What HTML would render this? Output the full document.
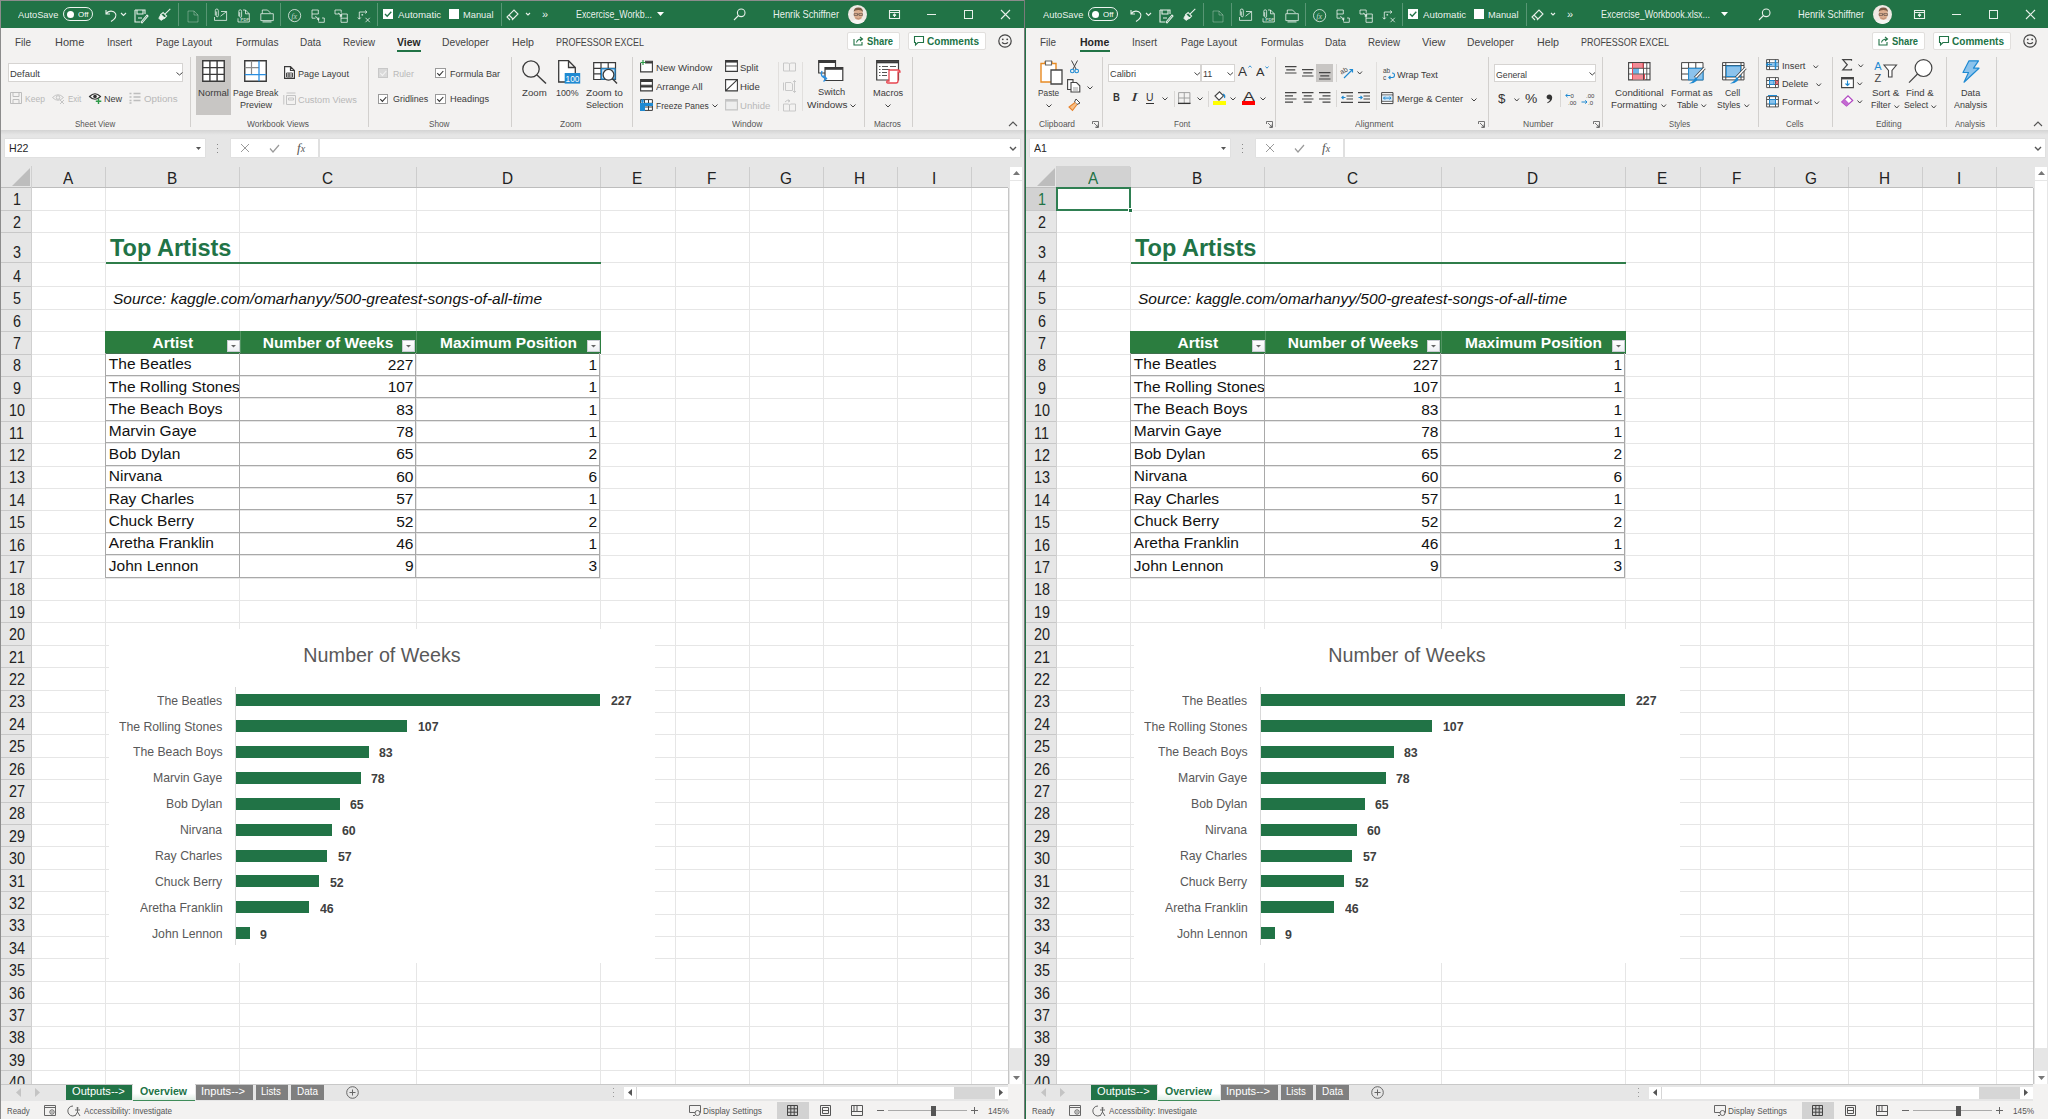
<!DOCTYPE html>
<html><head><meta charset="utf-8"><style>
*{margin:0;padding:0;box-sizing:border-box}
html,body{width:2048px;height:1119px;overflow:hidden;background:#fff;font-family:"Liberation Sans", sans-serif}
.win{position:absolute;top:0;height:1119px;overflow:hidden}
</style></head><body>
<div class="win" style="left:0px;width:1025px;background:#f3f2f1"><div style="position:absolute;left:0px;top:0px;width:1026px;height:28px;background:#217346"></div><div style="position:absolute;left:17.60px;top:9.97px;font-size:9.6px;line-height:9.6px;color:rgba(255,255,255,0.92);white-space:nowrap;transform:scaleX(0.9704);transform-origin:0 0;">AutoSave</div><div style="position:absolute;left:63px;top:7px;width:30px;height:14px;border:1px solid rgba(255,255,255,0.92);border-radius:7px"></div><div style="position:absolute;left:66.5px;top:10.5px;width:7px;height:7px;background:#fff;border-radius:50%"></div><div style="position:absolute;left:78.00px;top:10.57px;font-size:7.6px;line-height:7.6px;color:#fff;white-space:nowrap;transform:scaleX(1.0403);transform-origin:0 0;">Off</div><svg style="position:absolute;left:104px;top:8px;overflow:visible" width="14" height="14" viewBox="0 0 14 14"><path d="M2 2 L2 6 L6 6 M2.3 5.8 C4 2.5 9.5 2 11.5 5.5 C13 8.5 11 11 7 13.5" fill="none" stroke="#e8f0ea" stroke-width="1.1"/></svg><svg style="position:absolute;left:120px;top:12px;overflow:visible" width="7" height="5" viewBox="0 0 7 5"><path d="M1 1 L3.5 3.5 L6 1" fill="none" stroke="#e8f0ea" stroke-width="1.1"/></svg><svg style="position:absolute;left:134px;top:9px;overflow:visible" width="14" height="14" viewBox="0 0 14 14"><path d="M1 1 H11 V5 M1 1 V13 H6 M3 1 V5 H9 V1 M4 9 H8" fill="none" stroke="#e8f0ea" stroke-width="1.1"/><path d="M7 13 L13 6 L14 7 L8 14 Z" fill="none" stroke="#e8f0ea" stroke-width="1.1"/></svg><svg style="position:absolute;left:158px;top:8px;overflow:visible" width="13" height="13" viewBox="0 0 13 13"><path d="M12.3 0.8 L7.2 5.8 M5.2 4.6 L8.6 8 L6.5 10.2 L2.8 6.6 Z" fill="none" stroke="#e8f0ea" stroke-width="1.1"/><path d="M2.8 6.6 L0.8 10.2 L3 12.4 L6.5 10.2 Z" fill="#e8f0ea" stroke="#e8f0ea" stroke-width="0.8"/></svg><div style="position:absolute;left:178px;top:3px;width:1px;height:23px;background:rgba(255,255,255,0.25)"></div><div style="position:absolute;left:206px;top:3px;width:1px;height:23px;background:rgba(255,255,255,0.25)"></div><div style="position:absolute;left:280px;top:3px;width:1px;height:23px;background:rgba(255,255,255,0.25)"></div><div style="position:absolute;left:377px;top:3px;width:1px;height:23px;background:rgba(255,255,255,0.25)"></div><div style="position:absolute;left:501px;top:3px;width:1px;height:23px;background:rgba(255,255,255,0.25)"></div><svg style="position:absolute;left:187px;top:10px;overflow:visible" width="12" height="13" viewBox="0 0 12 13"><path d="M1 1 H7 L11 5 V12 H1 Z M7 1 V5 H11" fill="none" stroke="rgba(255,255,255,0.3)" stroke-width="1"/></svg><svg style="position:absolute;left:213px;top:8px;overflow:visible" width="15" height="14" viewBox="0 0 15 14"><path d="M1.5 9 V12.4 H13.6 V3.5 H8" fill="none" stroke="rgba(255,255,255,0.72)" stroke-width="1"/><path d="M7.5 8.2 L13.4 3.7" fill="none" stroke="rgba(255,255,255,0.72)" stroke-width="1"/><path d="M2.3 7.5 V2.6 Q2.3 1 3.8 1 Q5.3 1 5.3 2.6 V7.6 Q5.3 8.8 4.2 8.8 Q3.3 8.8 3.3 7.6 V3.5" fill="none" stroke="rgba(255,255,255,0.72)" stroke-width="1"/></svg><svg style="position:absolute;left:236.5px;top:8.5px;overflow:visible" width="14" height="14" viewBox="0 0 14 14"><path d="M6 1 H8.5 L12.3 4.8 V13 H1 V9.3" fill="none" stroke="rgba(255,255,255,0.72)" stroke-width="1"/><path d="M8.5 1 V4.8 H12.3" fill="none" stroke="rgba(255,255,255,0.72)" stroke-width="1"/><path d="M1.8 7.3 V2.3 Q1.8 0.8 3.2 0.8 Q4.6 0.8 4.6 2.3 V7.3 Q4.6 8.4 3.6 8.4 Q2.7 8.4 2.7 7.3 V3.2" fill="none" stroke="rgba(255,255,255,0.72)" stroke-width="1"/><text x="3.6" y="12" font-size="4.2" fill="rgba(255,255,255,0.72)" font-family="Liberation Sans" font-weight="bold">PDF</text></svg><svg style="position:absolute;left:259.5px;top:8.5px;overflow:visible" width="14" height="14" viewBox="0 0 14 14"><path d="M2.3 4.5 V1 H7.5 L10.5 4 M0.8 4.7 H13.3 V11.6 H0.8 Z" fill="none" stroke="rgba(255,255,255,0.72)" stroke-width="1"/><path d="M2.5 12.9 H11.5" stroke="rgba(255,255,255,0.72)" stroke-width="1.2"/></svg><svg style="position:absolute;left:288px;top:9px;overflow:visible" width="14" height="14" viewBox="0 0 14 14"><circle cx="6.6" cy="6.6" r="6.1" fill="none" stroke="rgba(255,255,255,0.72)" stroke-width="1"/><text x="3.2" y="9.6" font-size="8" font-style="italic" fill="rgba(255,255,255,0.72)" font-family="Liberation Serif">fx</text></svg><svg style="position:absolute;left:310.5px;top:8.5px;overflow:visible" width="14" height="14" viewBox="0 0 14 14"><path d="M1 1 H7.3 V5 H1 Z M1 5 V9.2 H4.5 M7.5 12.5 V9.6 M7.5 13.3 H13.3 V9 H11" fill="none" stroke="rgba(255,255,255,0.72)" stroke-width="1"/><path d="M4.3 7.3 L7.8 10.3 M7.8 8.4 V10.3 H5.9" fill="none" stroke="rgba(255,255,255,0.72)" stroke-width="1.1"/></svg><svg style="position:absolute;left:333.5px;top:8.5px;overflow:visible" width="14" height="14" viewBox="0 0 14 14"><path d="M4.5 5 H1 V1 H7.2 V3.8 M7 5 H13.3 V13.3 H7 Z M7 9.2 H13.3" fill="none" stroke="rgba(255,255,255,0.72)" stroke-width="1"/><path d="M4.3 4 L7.6 7.1 M7.6 5.2 V7.1 H5.7" fill="none" stroke="rgba(255,255,255,0.72)" stroke-width="1.1"/></svg><svg style="position:absolute;left:357px;top:8.5px;overflow:visible" width="14" height="14" viewBox="0 0 14 14"><path d="M2.3 3 V10 M0.8 8.5 L2.3 10.2 L3.8 8.5 M2.3 3 H9.8 M8.2 1.5 L9.9 3 L8.2 4.5 M8.5 8.8 L12.8 13.2 M12.8 8.8 L8.5 13.2" fill="none" stroke="rgba(255,255,255,0.72)" stroke-width="1"/><rect x="4.5" y="5" width="1.6" height="1.6" fill="rgba(255,255,255,0.72)"/></svg><div style="position:absolute;left:383px;top:9px;width:10px;height:10px;background:#fff"></div><svg style="position:absolute;left:383px;top:9px;overflow:visible" width="10" height="10" viewBox="0 0 10 10"><path d="M2 5 L4.2 7.3 L8.3 2.8" fill="none" stroke="#217346" stroke-width="1.3"/></svg><div style="position:absolute;left:397.70px;top:9.80px;font-size:9.8px;line-height:9.8px;color:rgba(255,255,255,0.92);white-space:nowrap;transform:scaleX(0.9914);transform-origin:0 0;">Automatic</div><div style="position:absolute;left:449px;top:9px;width:10px;height:10px;background:#fff"></div><div style="position:absolute;left:463.20px;top:9.80px;font-size:9.8px;line-height:9.8px;color:rgba(255,255,255,0.92);white-space:nowrap;transform:scaleX(0.9489);transform-origin:0 0;">Manual</div><svg style="position:absolute;left:506px;top:8px;overflow:visible" width="13" height="13" viewBox="0 0 13 13"><path d="M4 12 L1 9 L8 2 L12 6 L6 12 M3 7 L7 11" fill="none" stroke="#e8f0ea" stroke-width="1.1"/></svg><svg style="position:absolute;left:525px;top:12px;overflow:visible" width="6" height="5" viewBox="0 0 6 5"><path d="M1 1 L3 3 L5 1" fill="none" stroke="#e8f0ea" stroke-width="1.1"/></svg><div style="position:absolute;top:8.5px;font-size:11px;line-height:11px;color:rgba(255,255,255,0.92);white-space:nowrap;;left:542px;">&#187;</div><div style="position:absolute;left:576.00px;top:9.84px;font-size:10px;line-height:10px;color:rgba(255,255,255,0.92);white-space:nowrap;transform:scaleX(0.8842);transform-origin:0 0;">Excercise_Workb...</div><svg style="position:absolute;left:657px;top:12px;overflow:visible" width="8" height="5" viewBox="0 0 8 5"><path d="M0 0 H7 L3.5 4 Z" fill="#fff"/></svg><svg style="position:absolute;left:733px;top:8px;overflow:visible" width="13" height="13" viewBox="0 0 13 13"><circle cx="8.2" cy="4.8" r="3.8" fill="none" stroke="#e8f0ea" stroke-width="1.1"/><path d="M5.5 7.5 L1 12" fill="none" stroke="#e8f0ea" stroke-width="1.1"/></svg><div style="position:absolute;left:772.70px;top:9.78px;font-size:10.3px;line-height:10.3px;color:rgba(255,255,255,0.92);white-space:nowrap;transform:scaleX(0.9030);transform-origin:0 0;">Henrik Schiffner</div><div style="position:absolute;left:847.5px;top:4.5px;width:19.6px;height:19.6px;border-radius:50%;overflow:hidden"><svg style="position:absolute;left:0px;top:0px;overflow:visible" width="20" height="20" viewBox="0 0 20 20"><rect width="20" height="20" fill="#efe9e4"/><path d="M2 20 Q3 14.5 10 14.5 Q17 14.5 18 20 Z" fill="#f7f5f3"/><ellipse cx="10.3" cy="9.3" rx="4.6" ry="5.6" fill="#dcae90"/><path d="M5.6 6.8 Q6 2.2 10.5 2.4 Q15 2.6 15 7 Q13.5 4.8 10.3 4.9 Q7 5 5.6 6.8 Z" fill="#7a5a44"/><path d="M6.2 8.6 H9.5 V10.5 H6.2 Z M11 8.6 H14.4 V10.5 H11 Z M9.5 9.2 H11" fill="none" stroke="#4a3f3a" stroke-width="0.55"/><path d="M7.5 12.8 Q10.3 14.6 13 12.8" fill="none" stroke="#b98a70" stroke-width="0.9"/></svg></div><svg style="position:absolute;left:889px;top:10px;overflow:visible" width="11" height="9" viewBox="0 0 11 9"><path d="M0.5 0.5 H10.5 V8.5 H0.5 Z M0.5 2.5 H10.5 M5.5 4 V7 M4 5.5 L5.5 4 L7 5.5" fill="none" stroke="#e8f0ea" stroke-width="1.1"/></svg><div style="position:absolute;left:927px;top:14px;width:9px;height:1px;background:#e8f0ea"></div><div style="position:absolute;left:964px;top:10px;width:9px;height:9px;border:1px solid #e8f0ea"></div><svg style="position:absolute;left:1001px;top:10px;overflow:visible" width="9" height="9" viewBox="0 0 9 9"><path d="M0 0 L9 9 M9 0 L0 9" fill="none" stroke="#e8f0ea" stroke-width="1.1"/></svg><div style="position:absolute;left:14.50px;top:36.53px;font-size:10.6px;line-height:10.6px;color:#444;white-space:nowrap;transform:scaleX(0.9367);transform-origin:0 0;">File</div><div style="position:absolute;left:55.00px;top:36.53px;font-size:10.6px;line-height:10.6px;color:#444;white-space:nowrap;transform:scaleX(1.0362);transform-origin:0 0;">Home</div><div style="position:absolute;left:107.00px;top:36.53px;font-size:10.6px;line-height:10.6px;color:#444;white-space:nowrap;transform:scaleX(0.9430);transform-origin:0 0;">Insert</div><div style="position:absolute;left:156.00px;top:36.53px;font-size:10.6px;line-height:10.6px;color:#444;white-space:nowrap;transform:scaleX(0.9407);transform-origin:0 0;">Page Layout</div><div style="position:absolute;left:235.50px;top:36.53px;font-size:10.6px;line-height:10.6px;color:#444;white-space:nowrap;transform:scaleX(0.9620);transform-origin:0 0;">Formulas</div><div style="position:absolute;left:300.00px;top:36.53px;font-size:10.6px;line-height:10.6px;color:#444;white-space:nowrap;transform:scaleX(0.9379);transform-origin:0 0;">Data</div><div style="position:absolute;left:343.00px;top:36.53px;font-size:10.6px;line-height:10.6px;color:#444;white-space:nowrap;transform:scaleX(0.9207);transform-origin:0 0;">Review</div><div style="position:absolute;left:397.00px;top:36.53px;font-size:10.6px;line-height:10.6px;color:#262626;white-space:nowrap;transform:scaleX(0.9806);transform-origin:0 0;font-weight:bold;">View</div><div style="position:absolute;left:396.5px;top:49.5px;width:24.5px;height:2.5px;background:#217346"></div><div style="position:absolute;left:442.00px;top:36.53px;font-size:10.6px;line-height:10.6px;color:#444;white-space:nowrap;transform:scaleX(0.9727);transform-origin:0 0;">Developer</div><div style="position:absolute;left:512.00px;top:36.53px;font-size:10.6px;line-height:10.6px;color:#444;white-space:nowrap;transform:scaleX(1.0091);transform-origin:0 0;">Help</div><div style="position:absolute;left:556.00px;top:36.53px;font-size:10.6px;line-height:10.6px;color:#444;white-space:nowrap;transform:scaleX(0.8440);transform-origin:0 0;">PROFESSOR EXCEL</div><div style="position:absolute;left:847px;top:32px;width:53px;height:18px;background:#fff;border:1px solid #e1dfdd;border-radius:2px"></div><svg style="position:absolute;left:853px;top:36px;overflow:visible" width="11" height="10" viewBox="0 0 11 10"><path d="M1 3 V9 H9 V6 M3.5 6.5 C4 4 6 3 9 3 M7 1 L9.5 3 L7 5" fill="none" stroke="#217346" stroke-width="1.1"/></svg><div style="position:absolute;left:866.70px;top:36.36px;font-size:10.8px;line-height:10.8px;color:#217346;white-space:nowrap;transform:scaleX(0.8695);transform-origin:0 0;font-weight:bold;">Share</div><div style="position:absolute;left:908px;top:32px;width:78px;height:18px;background:#fff;border:1px solid #e1dfdd;border-radius:2px"></div><svg style="position:absolute;left:914px;top:36px;overflow:visible" width="10" height="10" viewBox="0 0 10 10"><path d="M0.5 0.5 H9.5 V6.5 H4 L1.5 9 V6.5 H0.5 Z" fill="none" stroke="#217346" stroke-width="1.1"/></svg><div style="position:absolute;left:927.00px;top:36.36px;font-size:10.8px;line-height:10.8px;color:#217346;white-space:nowrap;transform:scaleX(0.9317);transform-origin:0 0;font-weight:bold;">Comments</div><svg style="position:absolute;left:998px;top:34px;overflow:visible" width="14" height="14" viewBox="0 0 14 14"><circle cx="7" cy="7" r="6.2" fill="none" stroke="#444" stroke-width="1.2"/><circle cx="4.8" cy="5.3" r="0.9" fill="#444"/><circle cx="9.2" cy="5.3" r="0.9" fill="#444"/><path d="M4 8.5 Q7 11 10 8.5" fill="none" stroke="#444" stroke-width="1.1"/></svg><div style="position:absolute;left:7.5px;top:63px;width:175.5px;height:19px;background:#fff;border:1px solid #d6d4d2"></div><div style="position:absolute;left:9.50px;top:68.99px;font-size:9.7px;line-height:9.7px;color:#3b3b3b;white-space:nowrap;transform:scaleX(0.9728);transform-origin:0 0;">Default</div><svg style="position:absolute;left:175.5px;top:72px;overflow:visible" width="7" height="4" viewBox="0 0 7 4"><path d="M0.5 0.5 L3.5 3 L6.5 0.5" fill="none" stroke="#444" stroke-width="1"/></svg><svg style="position:absolute;left:9.5px;top:92px;overflow:visible" width="12" height="12" viewBox="0 0 12 12"><path d="M0.5 0.5 H11.5 V11.5 H0.5 Z M3 0.5 V4.5 H9 V0.5 M3 11.5 V7.5 H9 V11.5" fill="none" stroke="#bdbdbd" stroke-width="1"/></svg><div style="position:absolute;left:24.80px;top:94.29px;font-size:9.7px;line-height:9.7px;color:#b8b8b8;white-space:nowrap;transform:scaleX(0.8784);transform-origin:0 0;">Keep</div><svg style="position:absolute;left:52.3px;top:93px;overflow:visible" width="13" height="11" viewBox="0 0 13 11"><path d="M0.5 4.5 Q6 -1 11.5 4.5 Q6 10 0.5 4.5 Z" fill="none" stroke="#c4c4c4"/><circle cx="6" cy="4.5" r="1.8" fill="none" stroke="#c4c4c4"/><path d="M8 7 L12 11 M12 7 L8 11" stroke="#c4c4c4"/></svg><div style="position:absolute;left:67.90px;top:94.29px;font-size:9.7px;line-height:9.7px;color:#b8b8b8;white-space:nowrap;transform:scaleX(0.8225);transform-origin:0 0;">Exit</div><svg style="position:absolute;left:88.9px;top:92px;overflow:visible" width="13" height="12" viewBox="0 0 13 12"><path d="M0.5 4.5 Q6 -1 11.5 4.5 Q6 10 0.5 4.5 Z" fill="none" stroke="#333" stroke-width="1.1"/><circle cx="6" cy="4.5" r="1.8" fill="#333"/><path d="M9.5 6.5 V12 M6.8 9.3 H12.3" stroke="#2e9a48" stroke-width="1.4"/></svg><div style="position:absolute;left:103.80px;top:94.29px;font-size:9.7px;line-height:9.7px;color:#3b3b3b;white-space:nowrap;transform:scaleX(0.9327);transform-origin:0 0;">New</div><svg style="position:absolute;left:129.2px;top:91.5px;overflow:visible" width="12" height="12" viewBox="0 0 12 12"><path d="M0.5 1.5 H2.5 M4.5 1.5 H11.5 M0.5 5 H2.5 M4.5 5 H11.5 M0.5 8.5 H2.5 M4.5 8.5 H11.5 M0.5 11 H2.5" stroke="#bdbdbd" stroke-width="1.3"/></svg><div style="position:absolute;left:144.00px;top:94.29px;font-size:9.7px;line-height:9.7px;color:#b8b8b8;white-space:nowrap;transform:scaleX(1.0081);transform-origin:0 0;">Options</div><div style="position:absolute;left:74.65px;top:120.01px;font-size:9.2px;line-height:9.2px;color:#555;white-space:nowrap;transform:scaleX(0.8690);transform-origin:0 0;">Sheet View</div><div style="position:absolute;left:189.5px;top:57px;width:1px;height:70px;background:#d2d0ce"></div><div style="position:absolute;left:196px;top:56px;width:35px;height:59px;background:#c8c6c4"></div><svg style="position:absolute;left:202.1px;top:59.7px;overflow:visible" width="23" height="22" viewBox="0 0 23 22"><path d="M0.75 0.75 H22.25 V21.25 H0.75 Z M7.9 0.75 V21.25 M15.1 0.75 V21.25 M0.75 7.6 H22.25 M0.75 14.4 H22.25" fill="#fff" stroke="#3a3a3a" stroke-width="1.4"/></svg><div style="position:absolute;left:197.90px;top:87.79px;font-size:9.7px;line-height:9.7px;color:#3b3b3b;white-space:nowrap;transform:scaleX(0.9884);transform-origin:0 0;">Normal</div><svg style="position:absolute;left:244.3px;top:59.7px;overflow:visible" width="23" height="22" viewBox="0 0 23 22"><path d="M0.75 0.75 H22.25 V21.25 H0.75 Z" fill="#fff" stroke="#3a3a3a" stroke-width="1.4"/><path d="M7.5 0.75 V14.7 M0.75 7.6 H15" stroke="#8a8a8a" stroke-width="1.2"/><path d="M15 0.75 V21.25 M0.75 14.7 H22.25" stroke="#2a8ee0" stroke-width="1.3"/></svg><div style="position:absolute;left:233.00px;top:87.79px;font-size:9.7px;line-height:9.7px;color:#3b3b3b;white-space:nowrap;transform:scaleX(0.8937);transform-origin:0 0;">Page Break</div><div style="position:absolute;left:239.60px;top:100.09px;font-size:9.7px;line-height:9.7px;color:#3b3b3b;white-space:nowrap;transform:scaleX(0.9304);transform-origin:0 0;">Preview</div><svg style="position:absolute;left:284px;top:66px;overflow:visible" width="11" height="13" viewBox="0 0 11 13"><path d="M0.6 0.6 H6.5 L10.4 4.5 V12.4 H0.6 Z M6.5 0.6 V4.5 H10.4" fill="#fff" stroke="#3a3a3a" stroke-width="1.2"/><path d="M2.5 7 H8.5 V11 H2.5 Z M2.5 9 H8.5 M5 7 V11" fill="none" stroke="#3a3a3a" stroke-width="0.9"/></svg><div style="position:absolute;left:298.00px;top:69.29px;font-size:9.7px;line-height:9.7px;color:#3b3b3b;white-space:nowrap;transform:scaleX(0.9362);transform-origin:0 0;">Page Layout</div><svg style="position:absolute;left:283px;top:92px;overflow:visible" width="13" height="13" viewBox="0 0 13 13"><path d="M3.5 1 H12.5 M3.5 3.5 H12.5 V12.5 H3.5 Z M5.5 6 H10.5 V8 H5.5 Z M0.8 3 V12.5" fill="none" stroke="#c4c4c4" stroke-width="1"/></svg><div style="position:absolute;left:298.00px;top:94.79px;font-size:9.7px;line-height:9.7px;color:#b8b8b8;white-space:nowrap;transform:scaleX(0.9545);transform-origin:0 0;">Custom Views</div><div style="position:absolute;left:247.00px;top:120.01px;font-size:9.2px;line-height:9.2px;color:#555;white-space:nowrap;transform:scaleX(0.9094);transform-origin:0 0;">Workbook Views</div><div style="position:absolute;left:368.4px;top:57px;width:1px;height:70px;background:#d2d0ce"></div><div style="position:absolute;left:377.5px;top:67.5px;width:10.5px;height:10.5px;background:#d9d9d9;border:1px solid #c8c8c8"></div><svg style="position:absolute;left:377.5px;top:67.5px;overflow:visible" width="10.5" height="10.5" viewBox="0 0 10.5 10.5"><path d="M2.3 5.2 L4.4 7.4 L8.3 3" fill="none" stroke="#f2f2f2" stroke-width="1.1"/></svg><div style="position:absolute;left:392.70px;top:68.69px;font-size:9.7px;line-height:9.7px;color:#b8b8b8;white-space:nowrap;transform:scaleX(0.8973);transform-origin:0 0;">Ruler</div><div style="position:absolute;left:435px;top:67.5px;width:10.5px;height:10.5px;background:#fff;border:1px solid #9a9a9a"></div><svg style="position:absolute;left:435px;top:67.5px;overflow:visible" width="10.5" height="10.5" viewBox="0 0 10.5 10.5"><path d="M2.3 5.2 L4.4 7.4 L8.3 3" fill="none" stroke="#333" stroke-width="1.1"/></svg><div style="position:absolute;left:450.40px;top:68.69px;font-size:9.7px;line-height:9.7px;color:#3b3b3b;white-space:nowrap;transform:scaleX(0.9388);transform-origin:0 0;">Formula Bar</div><div style="position:absolute;left:377.5px;top:93.5px;width:10.5px;height:10.5px;background:#fff;border:1px solid #9a9a9a"></div><svg style="position:absolute;left:377.5px;top:93.5px;overflow:visible" width="10.5" height="10.5" viewBox="0 0 10.5 10.5"><path d="M2.3 5.2 L4.4 7.4 L8.3 3" fill="none" stroke="#333" stroke-width="1.1"/></svg><div style="position:absolute;left:392.70px;top:94.29px;font-size:9.7px;line-height:9.7px;color:#3b3b3b;white-space:nowrap;transform:scaleX(0.9223);transform-origin:0 0;">Gridlines</div><div style="position:absolute;left:435px;top:93.5px;width:10.5px;height:10.5px;background:#fff;border:1px solid #9a9a9a"></div><svg style="position:absolute;left:435px;top:93.5px;overflow:visible" width="10.5" height="10.5" viewBox="0 0 10.5 10.5"><path d="M2.3 5.2 L4.4 7.4 L8.3 3" fill="none" stroke="#333" stroke-width="1.1"/></svg><div style="position:absolute;left:450.40px;top:94.29px;font-size:9.7px;line-height:9.7px;color:#3b3b3b;white-space:nowrap;transform:scaleX(0.9565);transform-origin:0 0;">Headings</div><div style="position:absolute;left:429.25px;top:120.01px;font-size:9.2px;line-height:9.2px;color:#555;white-space:nowrap;transform:scaleX(0.8907);transform-origin:0 0;">Show</div><div style="position:absolute;left:511px;top:57px;width:1px;height:70px;background:#d2d0ce"></div><svg style="position:absolute;left:522px;top:59.5px;overflow:visible" width="25" height="24" viewBox="0 0 25 24"><circle cx="9" cy="9" r="8.2" fill="none" stroke="#3a3a3a" stroke-width="1.3"/><path d="M15 15 L24 23.5" stroke="#3a3a3a" stroke-width="1.4"/></svg><div style="position:absolute;left:521.60px;top:87.79px;font-size:9.7px;line-height:9.7px;color:#3b3b3b;white-space:nowrap;transform:scaleX(0.9961);transform-origin:0 0;">Zoom</div><svg style="position:absolute;left:558px;top:60px;overflow:visible" width="23" height="24" viewBox="0 0 23 24"><path d="M0.7 0.7 H10.5 L17.3 7.5 V22 H0.7 Z M10.5 0.7 V7.5 H17.3" fill="#fff" stroke="#3a3a3a" stroke-width="1.3"/><rect x="6.7" y="13" width="15.5" height="10.6" fill="#1f8ad2"/><text x="7.6" y="21.6" font-size="9" fill="#fff" font-family="Liberation Sans" textLength="13.8" lengthAdjust="spacingAndGlyphs">100</text></svg><div style="position:absolute;left:555.90px;top:87.79px;font-size:9.7px;line-height:9.7px;color:#3b3b3b;white-space:nowrap;transform:scaleX(0.9150);transform-origin:0 0;">100%</div><svg style="position:absolute;left:593px;top:61.5px;overflow:visible" width="25" height="22" viewBox="0 0 25 22"><path d="M0.7 0.7 H22.5 V17.5 H0.7 Z M0.7 6.3 H22.5 M0.7 11.9 H22.5 M8 0.7 V17.5 M15.2 0.7 V17.5" fill="#fff" stroke="#3a3a3a" stroke-width="1.2"/><rect x="8.5" y="6.8" width="13.5" height="10.2" fill="#cfe6f7" stroke="#1f8ad2" stroke-width="1.2"/><circle cx="15.5" cy="12.8" r="5.4" fill="#fff" stroke="#3a3a3a" stroke-width="1.3"/><path d="M19.5 16.8 L24 21.5" stroke="#3a3a3a" stroke-width="1.4"/></svg><div style="position:absolute;left:586.20px;top:87.79px;font-size:9.7px;line-height:9.7px;color:#3b3b3b;white-space:nowrap;transform:scaleX(1.0371);transform-origin:0 0;">Zoom to</div><div style="position:absolute;left:585.80px;top:100.29px;font-size:9.7px;line-height:9.7px;color:#3b3b3b;white-space:nowrap;transform:scaleX(0.9322);transform-origin:0 0;">Selection</div><div style="position:absolute;left:559.75px;top:120.01px;font-size:9.2px;line-height:9.2px;color:#555;white-space:nowrap;transform:scaleX(0.9142);transform-origin:0 0;">Zoom</div><div style="position:absolute;left:631.5px;top:57px;width:1px;height:70px;background:#d2d0ce"></div><svg style="position:absolute;left:640.2px;top:59.5px;overflow:visible" width="13" height="12.5" viewBox="0 0 13 12.5"><path d="M0.6 3 V11.9 H12.4 V1.3 H5" fill="#fff" stroke="#3a3a3a" stroke-width="1.1"/><path d="M5 2.5 H12.4" stroke="#3a3a3a" stroke-width="2"/><path d="M3 0 V5 M0.5 2.5 H5.5" stroke="#2e9a48" stroke-width="1.2"/></svg><div style="position:absolute;left:655.50px;top:62.69px;font-size:9.7px;line-height:9.7px;color:#3b3b3b;white-space:nowrap;transform:scaleX(0.9965);transform-origin:0 0;">New Window</div><svg style="position:absolute;left:640.2px;top:79px;overflow:visible" width="13" height="12.5" viewBox="0 0 13 12.5"><path d="M0.6 0.6 H12.4 V11.9 H0.6 Z M0.6 6.2 H12.4" fill="#fff" stroke="#3a3a3a" stroke-width="1.1"/><path d="M0.6 2 H12.4 M0.6 7.6 H12.4" stroke="#3a3a3a" stroke-width="2"/></svg><div style="position:absolute;left:655.50px;top:82.29px;font-size:9.7px;line-height:9.7px;color:#3b3b3b;white-space:nowrap;transform:scaleX(0.9842);transform-origin:0 0;">Arrange All</div><svg style="position:absolute;left:640.2px;top:98.5px;overflow:visible" width="13.5" height="12" viewBox="0 0 13.5 12"><path d="M0.6 0.6 H12.4 V11.4 H0.6 Z M0.6 4.3 H12.4 M0.6 8 H12.4 M4.5 0.6 V11.4 M8.5 0.6 V11.4" fill="#fff" stroke="#3a3a3a" stroke-width="1"/><rect x="0" y="4" width="5" height="8" fill="#1f8ad2"/><rect x="0" y="4" width="13" height="3" fill="#1f8ad2"/><path d="M2.5 0 V4 M0.5 2 H4.5 M1 0.5 L4 3.5 M4 0.5 L1 3.5" stroke="#1f8ad2" stroke-width="0.9"/></svg><div style="position:absolute;left:655.50px;top:100.99px;font-size:9.7px;line-height:9.7px;color:#3b3b3b;white-space:nowrap;transform:scaleX(0.8727);transform-origin:0 0;">Freeze Panes</div><svg style="position:absolute;left:711.8px;top:104px;overflow:visible" width="6" height="4" viewBox="0 0 6 4"><path d="M0.5 0.5 L3.0 3 L5.5 0.5" fill="none" stroke="#444" stroke-width="1"/></svg><svg style="position:absolute;left:724.9px;top:59.8px;overflow:visible" width="13" height="12" viewBox="0 0 13 12"><path d="M0.6 0.6 H12.4 V11.4 H0.6 Z M0.6 6 H12.4" fill="#fff" stroke="#3a3a3a" stroke-width="1.1"/><path d="M0.6 1.6 H12.4" stroke="#3a3a3a" stroke-width="2"/></svg><div style="position:absolute;left:739.80px;top:62.69px;font-size:9.7px;line-height:9.7px;color:#3b3b3b;white-space:nowrap;transform:scaleX(0.9751);transform-origin:0 0;">Split</div><svg style="position:absolute;left:724.9px;top:79px;overflow:visible" width="13" height="12.5" viewBox="0 0 13 12.5"><path d="M0.6 0.6 H12.4 V11.9 H0.6 Z M0.6 11.9 L12.4 0.6" fill="#fff" stroke="#3a3a3a" stroke-width="1.1"/></svg><div style="position:absolute;left:739.80px;top:82.29px;font-size:9.7px;line-height:9.7px;color:#3b3b3b;white-space:nowrap;transform:scaleX(0.9925);transform-origin:0 0;">Hide</div><svg style="position:absolute;left:724.9px;top:98.7px;overflow:visible" width="13" height="11.5" viewBox="0 0 13 11.5"><path d="M0.6 0.6 H12.4 V10.9 H0.6 Z" fill="#eee" stroke="#c4c4c4" stroke-width="1.1"/><path d="M0.6 1.6 H12.4" stroke="#c4c4c4" stroke-width="2"/></svg><div style="position:absolute;left:739.80px;top:100.99px;font-size:9.7px;line-height:9.7px;color:#b8b8b8;white-space:nowrap;transform:scaleX(0.9889);transform-origin:0 0;">Unhide</div><div style="position:absolute;left:778px;top:62px;width:1px;height:49px;background:#e1dfdd"></div><div style="position:absolute;left:802px;top:62px;width:1px;height:49px;background:#e1dfdd"></div><svg style="position:absolute;left:783.3px;top:62px;overflow:visible" width="13" height="9.5" viewBox="0 0 13 9.5"><path d="M0.5 1 H5.5 L6.5 2 V9 H0.5 Z M6.5 2 L7.5 1 H12.5 V9 H6.5" fill="none" stroke="#c8c8c8" stroke-width="1"/></svg><svg style="position:absolute;left:783.3px;top:79.5px;overflow:visible" width="13" height="13" viewBox="0 0 13 13"><path d="M0.5 2.5 V10.5 M2.5 2.5 H8 L9.5 4 V10.5 H2.5 Z M11.5 0.5 V12.5 M10 2 L11.5 0.5 L13 2 M10 11 L11.5 12.5 L13 11" fill="none" stroke="#c8c8c8" stroke-width="1"/></svg><svg style="position:absolute;left:783.3px;top:98.5px;overflow:visible" width="13" height="12.5" viewBox="0 0 13 12.5"><path d="M0.5 5 H5.5 L6.5 6 V12 H0.5 Z M6.5 6 L7.5 5 H12.5 V12 H6.5 M2 3 Q4 0 7 2 M5.5 0.5 L7 2 L5 3" fill="none" stroke="#c8c8c8" stroke-width="1"/></svg><svg style="position:absolute;left:818.4px;top:59.8px;overflow:visible" width="26" height="24" viewBox="0 0 26 24"><path d="M0.7 0.7 H17.5 V13 H0.7 Z" fill="#fff" stroke="#3a3a3a" stroke-width="1.2"/><path d="M0.7 2 H17.5" stroke="#3a3a3a" stroke-width="2"/><path d="M7 7.5 H24.8 V20.5 H7 Z" fill="#fff" stroke="#3a3a3a" stroke-width="1.2"/><path d="M7 8.8 H24.8" stroke="#3a3a3a" stroke-width="2"/><path d="M4 11 Q1.5 17 8.5 18.5 M5.5 15.5 L8.5 18.5 L5.5 21.5" fill="none" stroke="#2a8ee0" stroke-width="1.4"/></svg><div style="position:absolute;left:817.70px;top:87.49px;font-size:9.7px;line-height:9.7px;color:#3b3b3b;white-space:nowrap;transform:scaleX(0.9555);transform-origin:0 0;">Switch</div><div style="position:absolute;left:807.00px;top:100.29px;font-size:9.7px;line-height:9.7px;color:#3b3b3b;white-space:nowrap;transform:scaleX(1.0292);transform-origin:0 0;">Windows</div><svg style="position:absolute;left:850px;top:104px;overflow:visible" width="6" height="4" viewBox="0 0 6 4"><path d="M0.5 0.5 L3.0 3 L5.5 0.5" fill="none" stroke="#444" stroke-width="1"/></svg><svg style="position:absolute;left:876.2px;top:60px;overflow:visible" width="25" height="24" viewBox="0 0 25 24"><path d="M0.7 0.7 H22.5 V20 H0.7 Z" fill="#fff" stroke="#3a3a3a" stroke-width="1.2"/><path d="M0.7 2.2 H22.5" stroke="#3a3a3a" stroke-width="2.2"/><path d="M3 6.5 H4.5 M6 6.5 H12 M14 6.5 H20 M3 9.5 H4.5 M6 9.5 H14 M3 12.5 H4.5 M6 12.5 H11 M3 15.5 H4.5 M6 15.5 H11" stroke="#555" stroke-width="1"/><path d="M13 10 H22 Q24 10 24 12 H22 V21 Q22 23 20 23 H12 Q10 23 11 21 H13 Z" fill="#fff" stroke="#e8454f" stroke-width="1.3"/></svg><div style="position:absolute;left:872.50px;top:87.79px;font-size:9.7px;line-height:9.7px;color:#3b3b3b;white-space:nowrap;transform:scaleX(0.9497);transform-origin:0 0;">Macros</div><svg style="position:absolute;left:885px;top:104px;overflow:visible" width="6" height="4" viewBox="0 0 6 4"><path d="M0.5 0.5 L3.0 3 L5.5 0.5" fill="none" stroke="#444" stroke-width="1"/></svg><div style="position:absolute;left:732.05px;top:120.01px;font-size:9.2px;line-height:9.2px;color:#555;white-space:nowrap;transform:scaleX(0.9321);transform-origin:0 0;">Window</div><div style="position:absolute;left:873.50px;top:120.01px;font-size:9.2px;line-height:9.2px;color:#555;white-space:nowrap;transform:scaleX(0.8952);transform-origin:0 0;">Macros</div><div style="position:absolute;left:863.7px;top:57px;width:1px;height:70px;background:#d2d0ce"></div><div style="position:absolute;left:911.9px;top:57px;width:1px;height:70px;background:#d2d0ce"></div><svg style="position:absolute;left:1008px;top:121px;overflow:visible" width="10" height="6" viewBox="0 0 10 6"><path d="M1 5 L5 1 L9 5" fill="none" stroke="#555" stroke-width="1.1"/></svg><div style="position:absolute;left:0px;top:130px;width:1026px;height:36px;background:#e6e6e6"></div><div style="position:absolute;left:0px;top:130px;width:1026px;height:5px;background:linear-gradient(#d4d4d4,#e6e6e6)"></div><div style="position:absolute;left:5px;top:139px;width:200px;height:18px;background:#fff;box-shadow:0 0 0 0.5px #dadada"></div><div style="position:absolute;top:142.5px;font-size:11.5px;line-height:11.5px;color:#262626;white-space:nowrap;;left:8.5px;transform:scaleX(0.92);transform-origin:0 0;">H22</div><svg style="position:absolute;left:196px;top:147px;overflow:visible" width="6" height="3" viewBox="0 0 6 3"><path d="M0 0 H5 L2.5 3 Z" fill="#555"/></svg><div style="position:absolute;left:217px;top:144px;width:1.2px;height:1.2px;background:#888"></div><div style="position:absolute;left:217px;top:148px;width:1.2px;height:1.2px;background:#888"></div><div style="position:absolute;left:217px;top:152px;width:1.2px;height:1.2px;background:#888"></div><div style="position:absolute;left:230.5px;top:139px;width:87px;height:18px;background:#fff;box-shadow:0 0 0 0.5px #dadada"></div><svg style="position:absolute;left:240px;top:143px;overflow:visible" width="10" height="10" viewBox="0 0 10 10"><path d="M1 1 L9 9 M9 1 L1 9" stroke="#9a9a9a" stroke-width="1"/></svg><svg style="position:absolute;left:269px;top:144px;overflow:visible" width="11" height="9" viewBox="0 0 11 9"><path d="M1 4.5 L4 8 L10 1" fill="none" stroke="#9a9a9a" stroke-width="1.2"/></svg><div style="position:absolute;top:141px;font-size:13px;line-height:13px;color:#555;white-space:nowrap;font-family:'Liberation Serif';left:297px;"><i>f</i><i style='font-size:10px'>x</i></div><div style="position:absolute;left:320px;top:139px;width:700px;height:18px;background:#fff;box-shadow:0 0 0 0.5px #dadada"></div><svg style="position:absolute;left:1009px;top:146px;overflow:visible" width="8" height="5" viewBox="0 0 8 5"><path d="M1 1 L4 4 L7 1" fill="none" stroke="#555" stroke-width="1.4"/></svg><div style="position:absolute;left:1px;top:165.5px;width:1006.5px;height:22px;background:#e6e6e6"></div><div style="position:absolute;left:31.5px;top:187.5px;width:976.0px;height:896.5px;background:#fff"></div><div style="position:absolute;left:1px;top:187.5px;width:30.5px;height:896.5px;background:#e6e6e6"></div><svg style="position:absolute;left:12px;top:168px;overflow:visible" width="19" height="18" viewBox="0 0 19 18"><path d="M18 0 V18 H0 Z" fill="#bdbdbd"/></svg><div style="position:absolute;left:105px;top:187.5px;width:1px;height:896.5px;background:#e6e6e6"></div><div style="position:absolute;left:105px;top:167px;width:1px;height:20.5px;background:#cdcdcd"></div><div style="position:absolute;left:239px;top:187.5px;width:1px;height:896.5px;background:#e6e6e6"></div><div style="position:absolute;left:239px;top:167px;width:1px;height:20.5px;background:#cdcdcd"></div><div style="position:absolute;left:416px;top:187.5px;width:1px;height:896.5px;background:#e6e6e6"></div><div style="position:absolute;left:416px;top:167px;width:1px;height:20.5px;background:#cdcdcd"></div><div style="position:absolute;left:600px;top:187.5px;width:1px;height:896.5px;background:#e6e6e6"></div><div style="position:absolute;left:600px;top:167px;width:1px;height:20.5px;background:#cdcdcd"></div><div style="position:absolute;left:675px;top:187.5px;width:1px;height:896.5px;background:#e6e6e6"></div><div style="position:absolute;left:675px;top:167px;width:1px;height:20.5px;background:#cdcdcd"></div><div style="position:absolute;left:749px;top:187.5px;width:1px;height:896.5px;background:#e6e6e6"></div><div style="position:absolute;left:749px;top:167px;width:1px;height:20.5px;background:#cdcdcd"></div><div style="position:absolute;left:823px;top:187.5px;width:1px;height:896.5px;background:#e6e6e6"></div><div style="position:absolute;left:823px;top:167px;width:1px;height:20.5px;background:#cdcdcd"></div><div style="position:absolute;left:897px;top:187.5px;width:1px;height:896.5px;background:#e6e6e6"></div><div style="position:absolute;left:897px;top:167px;width:1px;height:20.5px;background:#cdcdcd"></div><div style="position:absolute;left:971px;top:187.5px;width:1px;height:896.5px;background:#e6e6e6"></div><div style="position:absolute;left:971px;top:167px;width:1px;height:20.5px;background:#cdcdcd"></div><div style="position:absolute;left:31.5px;top:210px;width:976.0px;height:1px;background:#e6e6e6"></div><div style="position:absolute;left:1px;top:210px;width:30.5px;height:1px;background:#c8c8c8"></div><div style="position:absolute;left:31.5px;top:232px;width:976.0px;height:1px;background:#e6e6e6"></div><div style="position:absolute;left:1px;top:232px;width:30.5px;height:1px;background:#c8c8c8"></div><div style="position:absolute;left:31.5px;top:262px;width:976.0px;height:1px;background:#e6e6e6"></div><div style="position:absolute;left:1px;top:262px;width:30.5px;height:1px;background:#c8c8c8"></div><div style="position:absolute;left:31.5px;top:286px;width:976.0px;height:1px;background:#e6e6e6"></div><div style="position:absolute;left:1px;top:286px;width:30.5px;height:1px;background:#c8c8c8"></div><div style="position:absolute;left:31.5px;top:309px;width:976.0px;height:1px;background:#e6e6e6"></div><div style="position:absolute;left:1px;top:309px;width:30.5px;height:1px;background:#c8c8c8"></div><div style="position:absolute;left:31.5px;top:331px;width:976.0px;height:1px;background:#e6e6e6"></div><div style="position:absolute;left:1px;top:331px;width:30.5px;height:1px;background:#c8c8c8"></div><div style="position:absolute;left:31.5px;top:354px;width:976.0px;height:1px;background:#e6e6e6"></div><div style="position:absolute;left:1px;top:354px;width:30.5px;height:1px;background:#c8c8c8"></div><div style="position:absolute;left:31.5px;top:376px;width:976.0px;height:1px;background:#e6e6e6"></div><div style="position:absolute;left:1px;top:376px;width:30.5px;height:1px;background:#c8c8c8"></div><div style="position:absolute;left:31.5px;top:398px;width:976.0px;height:1px;background:#e6e6e6"></div><div style="position:absolute;left:1px;top:398px;width:30.5px;height:1px;background:#c8c8c8"></div><div style="position:absolute;left:31.5px;top:421px;width:976.0px;height:1px;background:#e6e6e6"></div><div style="position:absolute;left:1px;top:421px;width:30.5px;height:1px;background:#c8c8c8"></div><div style="position:absolute;left:31.5px;top:443px;width:976.0px;height:1px;background:#e6e6e6"></div><div style="position:absolute;left:1px;top:443px;width:30.5px;height:1px;background:#c8c8c8"></div><div style="position:absolute;left:31.5px;top:466px;width:976.0px;height:1px;background:#e6e6e6"></div><div style="position:absolute;left:1px;top:466px;width:30.5px;height:1px;background:#c8c8c8"></div><div style="position:absolute;left:31.5px;top:488px;width:976.0px;height:1px;background:#e6e6e6"></div><div style="position:absolute;left:1px;top:488px;width:30.5px;height:1px;background:#c8c8c8"></div><div style="position:absolute;left:31.5px;top:510px;width:976.0px;height:1px;background:#e6e6e6"></div><div style="position:absolute;left:1px;top:510px;width:30.5px;height:1px;background:#c8c8c8"></div><div style="position:absolute;left:31.5px;top:533px;width:976.0px;height:1px;background:#e6e6e6"></div><div style="position:absolute;left:1px;top:533px;width:30.5px;height:1px;background:#c8c8c8"></div><div style="position:absolute;left:31.5px;top:555px;width:976.0px;height:1px;background:#e6e6e6"></div><div style="position:absolute;left:1px;top:555px;width:30.5px;height:1px;background:#c8c8c8"></div><div style="position:absolute;left:31.5px;top:578px;width:976.0px;height:1px;background:#e6e6e6"></div><div style="position:absolute;left:1px;top:578px;width:30.5px;height:1px;background:#c8c8c8"></div><div style="position:absolute;left:31.5px;top:600px;width:976.0px;height:1px;background:#e6e6e6"></div><div style="position:absolute;left:1px;top:600px;width:30.5px;height:1px;background:#c8c8c8"></div><div style="position:absolute;left:31.5px;top:622px;width:976.0px;height:1px;background:#e6e6e6"></div><div style="position:absolute;left:1px;top:622px;width:30.5px;height:1px;background:#c8c8c8"></div><div style="position:absolute;left:31.5px;top:645px;width:976.0px;height:1px;background:#e6e6e6"></div><div style="position:absolute;left:1px;top:645px;width:30.5px;height:1px;background:#c8c8c8"></div><div style="position:absolute;left:31.5px;top:667px;width:976.0px;height:1px;background:#e6e6e6"></div><div style="position:absolute;left:1px;top:667px;width:30.5px;height:1px;background:#c8c8c8"></div><div style="position:absolute;left:31.5px;top:690px;width:976.0px;height:1px;background:#e6e6e6"></div><div style="position:absolute;left:1px;top:690px;width:30.5px;height:1px;background:#c8c8c8"></div><div style="position:absolute;left:31.5px;top:712px;width:976.0px;height:1px;background:#e6e6e6"></div><div style="position:absolute;left:1px;top:712px;width:30.5px;height:1px;background:#c8c8c8"></div><div style="position:absolute;left:31.5px;top:734px;width:976.0px;height:1px;background:#e6e6e6"></div><div style="position:absolute;left:1px;top:734px;width:30.5px;height:1px;background:#c8c8c8"></div><div style="position:absolute;left:31.5px;top:757px;width:976.0px;height:1px;background:#e6e6e6"></div><div style="position:absolute;left:1px;top:757px;width:30.5px;height:1px;background:#c8c8c8"></div><div style="position:absolute;left:31.5px;top:779px;width:976.0px;height:1px;background:#e6e6e6"></div><div style="position:absolute;left:1px;top:779px;width:30.5px;height:1px;background:#c8c8c8"></div><div style="position:absolute;left:31.5px;top:802px;width:976.0px;height:1px;background:#e6e6e6"></div><div style="position:absolute;left:1px;top:802px;width:30.5px;height:1px;background:#c8c8c8"></div><div style="position:absolute;left:31.5px;top:824px;width:976.0px;height:1px;background:#e6e6e6"></div><div style="position:absolute;left:1px;top:824px;width:30.5px;height:1px;background:#c8c8c8"></div><div style="position:absolute;left:31.5px;top:846px;width:976.0px;height:1px;background:#e6e6e6"></div><div style="position:absolute;left:1px;top:846px;width:30.5px;height:1px;background:#c8c8c8"></div><div style="position:absolute;left:31.5px;top:869px;width:976.0px;height:1px;background:#e6e6e6"></div><div style="position:absolute;left:1px;top:869px;width:30.5px;height:1px;background:#c8c8c8"></div><div style="position:absolute;left:31.5px;top:891px;width:976.0px;height:1px;background:#e6e6e6"></div><div style="position:absolute;left:1px;top:891px;width:30.5px;height:1px;background:#c8c8c8"></div><div style="position:absolute;left:31.5px;top:914px;width:976.0px;height:1px;background:#e6e6e6"></div><div style="position:absolute;left:1px;top:914px;width:30.5px;height:1px;background:#c8c8c8"></div><div style="position:absolute;left:31.5px;top:936px;width:976.0px;height:1px;background:#e6e6e6"></div><div style="position:absolute;left:1px;top:936px;width:30.5px;height:1px;background:#c8c8c8"></div><div style="position:absolute;left:31.5px;top:958px;width:976.0px;height:1px;background:#e6e6e6"></div><div style="position:absolute;left:1px;top:958px;width:30.5px;height:1px;background:#c8c8c8"></div><div style="position:absolute;left:31.5px;top:981px;width:976.0px;height:1px;background:#e6e6e6"></div><div style="position:absolute;left:1px;top:981px;width:30.5px;height:1px;background:#c8c8c8"></div><div style="position:absolute;left:31.5px;top:1003px;width:976.0px;height:1px;background:#e6e6e6"></div><div style="position:absolute;left:1px;top:1003px;width:30.5px;height:1px;background:#c8c8c8"></div><div style="position:absolute;left:31.5px;top:1026px;width:976.0px;height:1px;background:#e6e6e6"></div><div style="position:absolute;left:1px;top:1026px;width:30.5px;height:1px;background:#c8c8c8"></div><div style="position:absolute;left:31.5px;top:1048px;width:976.0px;height:1px;background:#e6e6e6"></div><div style="position:absolute;left:1px;top:1048px;width:30.5px;height:1px;background:#c8c8c8"></div><div style="position:absolute;left:31.5px;top:1070px;width:976.0px;height:1px;background:#e6e6e6"></div><div style="position:absolute;left:1px;top:1070px;width:30.5px;height:1px;background:#c8c8c8"></div><div style="position:absolute;left:1px;top:187px;width:1006.5px;height:1px;background:#bdbdbd"></div><div style="position:absolute;left:31px;top:165.5px;width:1px;height:918.5px;background:#d0d0d0"></div><div style="position:absolute;left:62.88px;top:169.53px;font-size:16.5px;line-height:16.5px;color:#222;white-space:nowrap;transform:scaleX(0.9300);transform-origin:0 0;">A</div><div style="position:absolute;left:166.88px;top:169.53px;font-size:16.5px;line-height:16.5px;color:#222;white-space:nowrap;transform:scaleX(0.9300);transform-origin:0 0;">B</div><div style="position:absolute;left:321.96px;top:169.53px;font-size:16.5px;line-height:16.5px;color:#222;white-space:nowrap;transform:scaleX(0.9300);transform-origin:0 0;">C</div><div style="position:absolute;left:502.46px;top:169.53px;font-size:16.5px;line-height:16.5px;color:#222;white-space:nowrap;transform:scaleX(0.9300);transform-origin:0 0;">D</div><div style="position:absolute;left:632.38px;top:169.53px;font-size:16.5px;line-height:16.5px;color:#222;white-space:nowrap;transform:scaleX(0.9300);transform-origin:0 0;">E</div><div style="position:absolute;left:707.31px;top:169.53px;font-size:16.5px;line-height:16.5px;color:#222;white-space:nowrap;transform:scaleX(0.9300);transform-origin:0 0;">F</div><div style="position:absolute;left:780.03px;top:169.53px;font-size:16.5px;line-height:16.5px;color:#222;white-space:nowrap;transform:scaleX(0.9300);transform-origin:0 0;">G</div><div style="position:absolute;left:854.46px;top:169.53px;font-size:16.5px;line-height:16.5px;color:#222;white-space:nowrap;transform:scaleX(0.9300);transform-origin:0 0;">H</div><div style="position:absolute;left:931.87px;top:169.53px;font-size:16.5px;line-height:16.5px;color:#222;white-space:nowrap;transform:scaleX(0.9300);transform-origin:0 0;">I</div><div style="position:absolute;left:12.51px;top:191.13px;font-size:16.5px;line-height:16.5px;color:#222;white-space:nowrap;transform:scaleX(0.8700);transform-origin:0 0;">1</div><div style="position:absolute;left:12.51px;top:213.63px;font-size:16.5px;line-height:16.5px;color:#222;white-space:nowrap;transform:scaleX(0.8700);transform-origin:0 0;">2</div><div style="position:absolute;left:12.51px;top:243.53px;font-size:16.5px;line-height:16.5px;color:#222;white-space:nowrap;transform:scaleX(0.8700);transform-origin:0 0;">3</div><div style="position:absolute;left:12.51px;top:267.73px;font-size:16.5px;line-height:16.5px;color:#222;white-space:nowrap;transform:scaleX(0.8700);transform-origin:0 0;">4</div><div style="position:absolute;left:12.51px;top:290.13px;font-size:16.5px;line-height:16.5px;color:#222;white-space:nowrap;transform:scaleX(0.8700);transform-origin:0 0;">5</div><div style="position:absolute;left:12.51px;top:312.53px;font-size:16.5px;line-height:16.5px;color:#222;white-space:nowrap;transform:scaleX(0.8700);transform-origin:0 0;">6</div><div style="position:absolute;left:12.51px;top:334.93px;font-size:16.5px;line-height:16.5px;color:#222;white-space:nowrap;transform:scaleX(0.8700);transform-origin:0 0;">7</div><div style="position:absolute;left:12.51px;top:357.33px;font-size:16.5px;line-height:16.5px;color:#222;white-space:nowrap;transform:scaleX(0.8700);transform-origin:0 0;">8</div><div style="position:absolute;left:12.51px;top:379.73px;font-size:16.5px;line-height:16.5px;color:#222;white-space:nowrap;transform:scaleX(0.8700);transform-origin:0 0;">9</div><div style="position:absolute;left:8.52px;top:402.13px;font-size:16.5px;line-height:16.5px;color:#222;white-space:nowrap;transform:scaleX(0.8700);transform-origin:0 0;">10</div><div style="position:absolute;left:9.05px;top:424.53px;font-size:16.5px;line-height:16.5px;color:#222;white-space:nowrap;transform:scaleX(0.8700);transform-origin:0 0;">11</div><div style="position:absolute;left:8.52px;top:446.93px;font-size:16.5px;line-height:16.5px;color:#222;white-space:nowrap;transform:scaleX(0.8700);transform-origin:0 0;">12</div><div style="position:absolute;left:8.52px;top:469.33px;font-size:16.5px;line-height:16.5px;color:#222;white-space:nowrap;transform:scaleX(0.8700);transform-origin:0 0;">13</div><div style="position:absolute;left:8.52px;top:491.73px;font-size:16.5px;line-height:16.5px;color:#222;white-space:nowrap;transform:scaleX(0.8700);transform-origin:0 0;">14</div><div style="position:absolute;left:8.52px;top:514.13px;font-size:16.5px;line-height:16.5px;color:#222;white-space:nowrap;transform:scaleX(0.8700);transform-origin:0 0;">15</div><div style="position:absolute;left:8.52px;top:536.53px;font-size:16.5px;line-height:16.5px;color:#222;white-space:nowrap;transform:scaleX(0.8700);transform-origin:0 0;">16</div><div style="position:absolute;left:8.52px;top:558.93px;font-size:16.5px;line-height:16.5px;color:#222;white-space:nowrap;transform:scaleX(0.8700);transform-origin:0 0;">17</div><div style="position:absolute;left:8.52px;top:581.33px;font-size:16.5px;line-height:16.5px;color:#222;white-space:nowrap;transform:scaleX(0.8700);transform-origin:0 0;">18</div><div style="position:absolute;left:8.52px;top:603.73px;font-size:16.5px;line-height:16.5px;color:#222;white-space:nowrap;transform:scaleX(0.8700);transform-origin:0 0;">19</div><div style="position:absolute;left:8.52px;top:626.13px;font-size:16.5px;line-height:16.5px;color:#222;white-space:nowrap;transform:scaleX(0.8700);transform-origin:0 0;">20</div><div style="position:absolute;left:8.52px;top:648.53px;font-size:16.5px;line-height:16.5px;color:#222;white-space:nowrap;transform:scaleX(0.8700);transform-origin:0 0;">21</div><div style="position:absolute;left:8.52px;top:670.93px;font-size:16.5px;line-height:16.5px;color:#222;white-space:nowrap;transform:scaleX(0.8700);transform-origin:0 0;">22</div><div style="position:absolute;left:8.52px;top:693.33px;font-size:16.5px;line-height:16.5px;color:#222;white-space:nowrap;transform:scaleX(0.8700);transform-origin:0 0;">23</div><div style="position:absolute;left:8.52px;top:715.73px;font-size:16.5px;line-height:16.5px;color:#222;white-space:nowrap;transform:scaleX(0.8700);transform-origin:0 0;">24</div><div style="position:absolute;left:8.52px;top:738.13px;font-size:16.5px;line-height:16.5px;color:#222;white-space:nowrap;transform:scaleX(0.8700);transform-origin:0 0;">25</div><div style="position:absolute;left:8.52px;top:760.53px;font-size:16.5px;line-height:16.5px;color:#222;white-space:nowrap;transform:scaleX(0.8700);transform-origin:0 0;">26</div><div style="position:absolute;left:8.52px;top:782.93px;font-size:16.5px;line-height:16.5px;color:#222;white-space:nowrap;transform:scaleX(0.8700);transform-origin:0 0;">27</div><div style="position:absolute;left:8.52px;top:805.33px;font-size:16.5px;line-height:16.5px;color:#222;white-space:nowrap;transform:scaleX(0.8700);transform-origin:0 0;">28</div><div style="position:absolute;left:8.52px;top:827.73px;font-size:16.5px;line-height:16.5px;color:#222;white-space:nowrap;transform:scaleX(0.8700);transform-origin:0 0;">29</div><div style="position:absolute;left:8.52px;top:850.13px;font-size:16.5px;line-height:16.5px;color:#222;white-space:nowrap;transform:scaleX(0.8700);transform-origin:0 0;">30</div><div style="position:absolute;left:8.52px;top:872.53px;font-size:16.5px;line-height:16.5px;color:#222;white-space:nowrap;transform:scaleX(0.8700);transform-origin:0 0;">31</div><div style="position:absolute;left:8.52px;top:894.93px;font-size:16.5px;line-height:16.5px;color:#222;white-space:nowrap;transform:scaleX(0.8700);transform-origin:0 0;">32</div><div style="position:absolute;left:8.52px;top:917.33px;font-size:16.5px;line-height:16.5px;color:#222;white-space:nowrap;transform:scaleX(0.8700);transform-origin:0 0;">33</div><div style="position:absolute;left:8.52px;top:939.73px;font-size:16.5px;line-height:16.5px;color:#222;white-space:nowrap;transform:scaleX(0.8700);transform-origin:0 0;">34</div><div style="position:absolute;left:8.52px;top:962.13px;font-size:16.5px;line-height:16.5px;color:#222;white-space:nowrap;transform:scaleX(0.8700);transform-origin:0 0;">35</div><div style="position:absolute;left:8.52px;top:984.53px;font-size:16.5px;line-height:16.5px;color:#222;white-space:nowrap;transform:scaleX(0.8700);transform-origin:0 0;">36</div><div style="position:absolute;left:8.52px;top:1006.93px;font-size:16.5px;line-height:16.5px;color:#222;white-space:nowrap;transform:scaleX(0.8700);transform-origin:0 0;">37</div><div style="position:absolute;left:8.52px;top:1029.33px;font-size:16.5px;line-height:16.5px;color:#222;white-space:nowrap;transform:scaleX(0.8700);transform-origin:0 0;">38</div><div style="position:absolute;left:8.52px;top:1051.73px;font-size:16.5px;line-height:16.5px;color:#222;white-space:nowrap;transform:scaleX(0.8700);transform-origin:0 0;">39</div><div style="position:absolute;left:8.52px;top:1074.13px;font-size:16.5px;line-height:16.5px;color:#222;white-space:nowrap;transform:scaleX(0.8700);transform-origin:0 0;">40</div><div style="position:absolute;left:1007.5px;top:165.5px;width:16.5px;height:918.5px;background:#e6e6e6"></div><div style="position:absolute;left:1007.5px;top:187.5px;width:1px;height:896.5px;background:#c6c6c6"></div><div style="position:absolute;left:1009.5px;top:166.5px;width:12.5px;height:13.5px;background:#fff"></div><svg style="position:absolute;left:1012.5px;top:171px;overflow:visible" width="7" height="4" viewBox="0 0 7 4"><path d="M0 4 L3.5 0 L7 4 Z" fill="#777"/></svg><div style="position:absolute;left:1009.5px;top:181px;width:12.5px;height:867px;background:#fff"></div><div style="position:absolute;left:1009.5px;top:1071px;width:12.5px;height:13px;background:#fff"></div><svg style="position:absolute;left:1012.5px;top:1076px;overflow:visible" width="7" height="4" viewBox="0 0 7 4"><path d="M0 0 L3.5 4 L7 0 Z" fill="#777"/></svg><div style="position:absolute;top:237.10725px;font-size:23.5px;line-height:23.5px;color:#217346;white-space:nowrap;font-weight:bold;left:110px;">Top Artists</div><div style="position:absolute;left:105.5px;top:261.6px;width:495px;height:2px;background:#2f7d4a"></div><div style="position:absolute;top:290.57925px;font-size:15.5px;line-height:15.5px;color:#111;white-space:nowrap;font-style:italic;left:113px;">Source: kaggle.com/omarhanyy/500-greatest-songs-of-all-time</div><div style="position:absolute;left:105px;top:354px;width:496px;height:1px;background:#fff"></div><div style="position:absolute;left:105px;top:331px;width:496px;height:22px;background:#2b7d3f"></div><div style="position:absolute;left:105px;top:353px;width:496px;height:1px;background:#3f6f4d"></div><div style="position:absolute;left:239.5px;top:331.3px;width:1px;height:22px;background:rgba(255,255,255,0.18)"></div><div style="position:absolute;left:415.5px;top:331.3px;width:1px;height:22px;background:rgba(255,255,255,0.18)"></div><div style="position:absolute;top:335.07925px;font-size:15.5px;line-height:15.5px;color:#fff;white-space:nowrap;font-weight:bold;left:172.8px;width:0;display:flex;justify-content:center;">Artist</div><div style="position:absolute;top:335.07925px;font-size:15.5px;line-height:15.5px;color:#fff;white-space:nowrap;font-weight:bold;left:328px;width:0;display:flex;justify-content:center;">Number of Weeks</div><div style="position:absolute;top:335.07925px;font-size:15.5px;line-height:15.5px;color:#fff;white-space:nowrap;font-weight:bold;left:508.5px;width:0;display:flex;justify-content:center;">Maximum Position</div><div style="position:absolute;left:226.6px;top:339.8px;width:13px;height:12.5px;background:linear-gradient(#fff,#eef0f4);border:1px solid #c9ccd2"></div><svg style="position:absolute;left:230.6px;top:345px;overflow:visible" width="5" height="3" viewBox="0 0 5 3"><path d="M0 0 H5 L2.5 2.6 Z" fill="#666"/></svg><div style="position:absolute;left:402.2px;top:339.8px;width:13px;height:12.5px;background:linear-gradient(#fff,#eef0f4);border:1px solid #c9ccd2"></div><svg style="position:absolute;left:406.2px;top:345px;overflow:visible" width="5" height="3" viewBox="0 0 5 3"><path d="M0 0 H5 L2.5 2.6 Z" fill="#666"/></svg><div style="position:absolute;left:587px;top:339.8px;width:13px;height:12.5px;background:linear-gradient(#fff,#eef0f4);border:1px solid #c9ccd2"></div><svg style="position:absolute;left:591px;top:345px;overflow:visible" width="5" height="3" viewBox="0 0 5 3"><path d="M0 0 H5 L2.5 2.6 Z" fill="#666"/></svg><div style="position:absolute;top:356.27925px;font-size:15.5px;line-height:15.5px;color:#111;white-space:nowrap;;left:108.8px;">The Beatles</div><div style="position:absolute;left:387.64px;top:356.78px;font-size:15.5px;line-height:15.5px;color:#111;white-space:nowrap;transform:scaleX(1.0000);transform-origin:0 0;">227</div><div style="position:absolute;left:588.38px;top:356.78px;font-size:15.5px;line-height:15.5px;color:#111;white-space:nowrap;transform:scaleX(1.0000);transform-origin:0 0;">1</div><div style="position:absolute;left:105px;top:375px;width:495px;height:1px;background:#a9a9a9"></div><div style="position:absolute;top:378.67925px;font-size:15.5px;line-height:15.5px;color:#111;white-space:nowrap;;left:108.8px;">The Rolling Stones</div><div style="position:absolute;left:387.64px;top:379.18px;font-size:15.5px;line-height:15.5px;color:#111;white-space:nowrap;transform:scaleX(1.0000);transform-origin:0 0;">107</div><div style="position:absolute;left:588.38px;top:379.18px;font-size:15.5px;line-height:15.5px;color:#111;white-space:nowrap;transform:scaleX(1.0000);transform-origin:0 0;">1</div><div style="position:absolute;left:105px;top:397px;width:495px;height:1px;background:#a9a9a9"></div><div style="position:absolute;top:401.07925px;font-size:15.5px;line-height:15.5px;color:#111;white-space:nowrap;;left:108.8px;">The Beach Boys</div><div style="position:absolute;left:396.26px;top:401.58px;font-size:15.5px;line-height:15.5px;color:#111;white-space:nowrap;transform:scaleX(1.0000);transform-origin:0 0;">83</div><div style="position:absolute;left:588.38px;top:401.58px;font-size:15.5px;line-height:15.5px;color:#111;white-space:nowrap;transform:scaleX(1.0000);transform-origin:0 0;">1</div><div style="position:absolute;left:105px;top:420px;width:495px;height:1px;background:#a9a9a9"></div><div style="position:absolute;top:423.47925px;font-size:15.5px;line-height:15.5px;color:#111;white-space:nowrap;;left:108.8px;">Marvin Gaye</div><div style="position:absolute;left:396.26px;top:423.98px;font-size:15.5px;line-height:15.5px;color:#111;white-space:nowrap;transform:scaleX(1.0000);transform-origin:0 0;">78</div><div style="position:absolute;left:588.38px;top:423.98px;font-size:15.5px;line-height:15.5px;color:#111;white-space:nowrap;transform:scaleX(1.0000);transform-origin:0 0;">1</div><div style="position:absolute;left:105px;top:442px;width:495px;height:1px;background:#a9a9a9"></div><div style="position:absolute;top:445.87924999999996px;font-size:15.5px;line-height:15.5px;color:#111;white-space:nowrap;;left:108.8px;">Bob Dylan</div><div style="position:absolute;left:396.26px;top:446.38px;font-size:15.5px;line-height:15.5px;color:#111;white-space:nowrap;transform:scaleX(1.0000);transform-origin:0 0;">65</div><div style="position:absolute;left:588.38px;top:446.38px;font-size:15.5px;line-height:15.5px;color:#111;white-space:nowrap;transform:scaleX(1.0000);transform-origin:0 0;">2</div><div style="position:absolute;left:105px;top:465px;width:495px;height:1px;background:#a9a9a9"></div><div style="position:absolute;top:468.27925px;font-size:15.5px;line-height:15.5px;color:#111;white-space:nowrap;;left:108.8px;">Nirvana</div><div style="position:absolute;left:396.26px;top:468.78px;font-size:15.5px;line-height:15.5px;color:#111;white-space:nowrap;transform:scaleX(1.0000);transform-origin:0 0;">60</div><div style="position:absolute;left:588.38px;top:468.78px;font-size:15.5px;line-height:15.5px;color:#111;white-space:nowrap;transform:scaleX(1.0000);transform-origin:0 0;">6</div><div style="position:absolute;left:105px;top:487px;width:495px;height:1px;background:#a9a9a9"></div><div style="position:absolute;top:490.67925px;font-size:15.5px;line-height:15.5px;color:#111;white-space:nowrap;;left:108.8px;">Ray Charles</div><div style="position:absolute;left:396.26px;top:491.18px;font-size:15.5px;line-height:15.5px;color:#111;white-space:nowrap;transform:scaleX(1.0000);transform-origin:0 0;">57</div><div style="position:absolute;left:588.38px;top:491.18px;font-size:15.5px;line-height:15.5px;color:#111;white-space:nowrap;transform:scaleX(1.0000);transform-origin:0 0;">1</div><div style="position:absolute;left:105px;top:509px;width:495px;height:1px;background:#a9a9a9"></div><div style="position:absolute;top:513.07925px;font-size:15.5px;line-height:15.5px;color:#111;white-space:nowrap;;left:108.8px;">Chuck Berry</div><div style="position:absolute;left:396.26px;top:513.58px;font-size:15.5px;line-height:15.5px;color:#111;white-space:nowrap;transform:scaleX(1.0000);transform-origin:0 0;">52</div><div style="position:absolute;left:588.38px;top:513.58px;font-size:15.5px;line-height:15.5px;color:#111;white-space:nowrap;transform:scaleX(1.0000);transform-origin:0 0;">2</div><div style="position:absolute;left:105px;top:532px;width:495px;height:1px;background:#a9a9a9"></div><div style="position:absolute;top:535.47925px;font-size:15.5px;line-height:15.5px;color:#111;white-space:nowrap;;left:108.8px;">Aretha Franklin</div><div style="position:absolute;left:396.26px;top:535.98px;font-size:15.5px;line-height:15.5px;color:#111;white-space:nowrap;transform:scaleX(1.0000);transform-origin:0 0;">46</div><div style="position:absolute;left:588.38px;top:535.98px;font-size:15.5px;line-height:15.5px;color:#111;white-space:nowrap;transform:scaleX(1.0000);transform-origin:0 0;">1</div><div style="position:absolute;left:105px;top:554px;width:495px;height:1px;background:#a9a9a9"></div><div style="position:absolute;top:557.87925px;font-size:15.5px;line-height:15.5px;color:#111;white-space:nowrap;;left:108.8px;">John Lennon</div><div style="position:absolute;left:404.88px;top:558.38px;font-size:15.5px;line-height:15.5px;color:#111;white-space:nowrap;transform:scaleX(1.0000);transform-origin:0 0;">9</div><div style="position:absolute;left:588.38px;top:558.38px;font-size:15.5px;line-height:15.5px;color:#111;white-space:nowrap;transform:scaleX(1.0000);transform-origin:0 0;">3</div><div style="position:absolute;left:105px;top:577px;width:495px;height:1px;background:#a9a9a9"></div><div style="position:absolute;left:105px;top:353px;width:1px;height:225px;background:#a9a9a9"></div><div style="position:absolute;left:239px;top:353px;width:1px;height:225px;background:#a9a9a9"></div><div style="position:absolute;left:415px;top:353px;width:1px;height:225px;background:#a9a9a9"></div><div style="position:absolute;left:599px;top:353px;width:1px;height:225px;background:#a9a9a9"></div><div style="position:absolute;left:109px;top:629px;width:546px;height:334px;background:#fff"></div><div style="position:absolute;top:645.07px;font-size:20px;line-height:20px;color:#595959;white-space:nowrap;;left:381.5px;width:0;display:flex;justify-content:center;transform:scaleX(0.985);transform-origin:50% 0;">Number of Weeks</div><div style="position:absolute;left:235px;top:687px;width:1px;height:258px;background:#d9d9d9"></div><div style="position:absolute;left:235.5px;top:694.0px;width:364.789px;height:12px;background:#217346"></div><div style="position:absolute;left:157.29px;top:693.60px;font-size:13px;line-height:13px;color:#595959;white-space:nowrap;transform:scaleX(0.9400);transform-origin:0 0;">The Beatles</div><div style="position:absolute;left:610.79px;top:694.40px;font-size:13px;line-height:13px;color:#404040;white-space:nowrap;transform:scaleX(0.9500);transform-origin:0 0;font-weight:bold;">227</div><div style="position:absolute;left:235.5px;top:719.92px;width:171.949px;height:12px;background:#217346"></div><div style="position:absolute;left:119.25px;top:719.52px;font-size:13px;line-height:13px;color:#595959;white-space:nowrap;transform:scaleX(0.9400);transform-origin:0 0;">The Rolling Stones</div><div style="position:absolute;left:417.95px;top:720.32px;font-size:13px;line-height:13px;color:#404040;white-space:nowrap;transform:scaleX(0.9500);transform-origin:0 0;font-weight:bold;">107</div><div style="position:absolute;left:235.5px;top:745.84px;width:133.381px;height:12px;background:#217346"></div><div style="position:absolute;left:132.83px;top:745.44px;font-size:13px;line-height:13px;color:#595959;white-space:nowrap;transform:scaleX(0.9400);transform-origin:0 0;">The Beach Boys</div><div style="position:absolute;left:379.38px;top:746.24px;font-size:13px;line-height:13px;color:#404040;white-space:nowrap;transform:scaleX(0.9500);transform-origin:0 0;font-weight:bold;">83</div><div style="position:absolute;left:235.5px;top:771.76px;width:125.346px;height:12px;background:#217346"></div><div style="position:absolute;left:153.23px;top:771.36px;font-size:13px;line-height:13px;color:#595959;white-space:nowrap;transform:scaleX(0.9400);transform-origin:0 0;">Marvin Gaye</div><div style="position:absolute;left:371.35px;top:772.16px;font-size:13px;line-height:13px;color:#404040;white-space:nowrap;transform:scaleX(0.9500);transform-origin:0 0;font-weight:bold;">78</div><div style="position:absolute;left:235.5px;top:797.6800000000001px;width:104.455px;height:12px;background:#217346"></div><div style="position:absolute;left:166.12px;top:797.28px;font-size:13px;line-height:13px;color:#595959;white-space:nowrap;transform:scaleX(0.9400);transform-origin:0 0;">Bob Dylan</div><div style="position:absolute;left:350.45px;top:798.08px;font-size:13px;line-height:13px;color:#404040;white-space:nowrap;transform:scaleX(0.9500);transform-origin:0 0;font-weight:bold;">65</div><div style="position:absolute;left:235.5px;top:823.6px;width:96.42px;height:12px;background:#217346"></div><div style="position:absolute;left:180.39px;top:823.20px;font-size:13px;line-height:13px;color:#595959;white-space:nowrap;transform:scaleX(0.9400);transform-origin:0 0;">Nirvana</div><div style="position:absolute;left:342.42px;top:824.00px;font-size:13px;line-height:13px;color:#404040;white-space:nowrap;transform:scaleX(0.9500);transform-origin:0 0;font-weight:bold;">60</div><div style="position:absolute;left:235.5px;top:849.52px;width:91.599px;height:12px;background:#217346"></div><div style="position:absolute;left:155.26px;top:849.12px;font-size:13px;line-height:13px;color:#595959;white-space:nowrap;transform:scaleX(0.9400);transform-origin:0 0;">Ray Charles</div><div style="position:absolute;left:337.60px;top:849.92px;font-size:13px;line-height:13px;color:#404040;white-space:nowrap;transform:scaleX(0.9500);transform-origin:0 0;font-weight:bold;">57</div><div style="position:absolute;left:235.5px;top:875.44px;width:83.564px;height:12px;background:#217346"></div><div style="position:absolute;left:155.27px;top:875.04px;font-size:13px;line-height:13px;color:#595959;white-space:nowrap;transform:scaleX(0.9400);transform-origin:0 0;">Chuck Berry</div><div style="position:absolute;left:329.56px;top:875.84px;font-size:13px;line-height:13px;color:#404040;white-space:nowrap;transform:scaleX(0.9500);transform-origin:0 0;font-weight:bold;">52</div><div style="position:absolute;left:235.5px;top:901.36px;width:73.922px;height:12px;background:#217346"></div><div style="position:absolute;left:139.64px;top:900.96px;font-size:13px;line-height:13px;color:#595959;white-space:nowrap;transform:scaleX(0.9400);transform-origin:0 0;">Aretha Franklin</div><div style="position:absolute;left:319.92px;top:901.76px;font-size:13px;line-height:13px;color:#404040;white-space:nowrap;transform:scaleX(0.9500);transform-origin:0 0;font-weight:bold;">46</div><div style="position:absolute;left:235.5px;top:927.28px;width:14.463px;height:12px;background:#217346"></div><div style="position:absolute;left:151.83px;top:926.88px;font-size:13px;line-height:13px;color:#595959;white-space:nowrap;transform:scaleX(0.9400);transform-origin:0 0;">John Lennon</div><div style="position:absolute;left:260.46px;top:927.68px;font-size:13px;line-height:13px;color:#404040;white-space:nowrap;transform:scaleX(0.9500);transform-origin:0 0;font-weight:bold;">9</div><div style="position:absolute;left:1px;top:1084px;width:1007px;height:17px;background:#e6e6e6"></div><div style="position:absolute;left:1px;top:1083.5px;width:1007px;height:1px;background:#c8c8c8"></div><svg style="position:absolute;left:16px;top:1088px;overflow:visible" width="6" height="9" viewBox="0 0 6 9"><path d="M5 0 V9 L0 4.5 Z" fill="#c4c4c4"/></svg><svg style="position:absolute;left:35px;top:1088px;overflow:visible" width="6" height="9" viewBox="0 0 6 9"><path d="M0 0 V9 L5 4.5 Z" fill="#c4c4c4"/></svg><div style="position:absolute;left:66px;top:1085px;width:66px;height:15px;background:#217346"></div><div style="position:absolute;left:71.60px;top:1086.21px;font-size:10.5px;line-height:10.5px;color:#fff;white-space:nowrap;transform:scaleX(1.0582);transform-origin:0 0;">Outputs--&gt;</div><div style="position:absolute;left:133px;top:1084px;width:61.5px;height:17px;background:linear-gradient(#fff 0%,#fff 55%,#d9eadf 100%)"></div><div style="position:absolute;left:133px;top:1099.5px;width:61.5px;height:1.5px;background:#3f8c5a"></div><div style="position:absolute;left:140.00px;top:1086.21px;font-size:10.5px;line-height:10.5px;color:#217346;white-space:nowrap;transform:scaleX(1.0065);transform-origin:0 0;font-weight:bold;">Overview</div><div style="position:absolute;left:195.5px;top:1085px;width:57.5px;height:15px;background:#7f7f7f"></div><div style="position:absolute;left:201.00px;top:1086.21px;font-size:10.5px;line-height:10.5px;color:#fff;white-space:nowrap;transform:scaleX(1.0544);transform-origin:0 0;">Inputs--&gt;</div><div style="position:absolute;left:256px;top:1085px;width:32px;height:15px;background:#7f7f7f"></div><div style="position:absolute;left:261.40px;top:1086.21px;font-size:10.5px;line-height:10.5px;color:#fff;white-space:nowrap;transform:scaleX(0.9171);transform-origin:0 0;">Lists</div><div style="position:absolute;left:291px;top:1085px;width:33px;height:15px;background:#7f7f7f"></div><div style="position:absolute;left:297.00px;top:1086.21px;font-size:10.5px;line-height:10.5px;color:#fff;white-space:nowrap;transform:scaleX(0.9468);transform-origin:0 0;">Data</div><svg style="position:absolute;left:346px;top:1086px;overflow:visible" width="13" height="13" viewBox="0 0 13 13"><circle cx="6.5" cy="6.5" r="5.8" fill="none" stroke="#666" stroke-width="1"/><path d="M6.5 3.5 V9.5 M3.5 6.5 H9.5" stroke="#666" stroke-width="1"/></svg><div style="position:absolute;left:613px;top:1088px;width:1.2px;height:1.2px;background:#999"></div><div style="position:absolute;left:613px;top:1092px;width:1.2px;height:1.2px;background:#999"></div><div style="position:absolute;left:613px;top:1096px;width:1.2px;height:1.2px;background:#999"></div><div style="position:absolute;left:624px;top:1086.5px;width:383.5px;height:12.5px;background:#d6d6d6"></div><div style="position:absolute;left:624px;top:1086.5px;width:12px;height:12.5px;background:#fff"></div><svg style="position:absolute;left:627.5px;top:1089px;overflow:visible" width="5" height="7" viewBox="0 0 5 7"><path d="M4 0 V7 L0 3.5 Z" fill="#555"/></svg><div style="position:absolute;left:637px;top:1086.5px;width:317px;height:12.5px;background:#fff"></div><div style="position:absolute;left:995px;top:1086.5px;width:12.5px;height:12.5px;background:#fff"></div><svg style="position:absolute;left:999px;top:1089px;overflow:visible" width="5" height="7" viewBox="0 0 5 7"><path d="M0 0 V7 L4 3.5 Z" fill="#555"/></svg><div style="position:absolute;left:1px;top:1101px;width:1024px;height:18px;background:#f3f2f1"></div><div style="position:absolute;left:7.00px;top:1106.83px;font-size:9.3px;line-height:9.3px;color:#555;white-space:nowrap;transform:scaleX(0.8444);transform-origin:0 0;">Ready</div><svg style="position:absolute;left:44px;top:1105px;overflow:visible" width="12" height="11" viewBox="0 0 12 11"><path d="M0.5 0.5 H11.5 V10.5 H0.5 Z M0.5 2.5 H11.5" fill="none" stroke="#666" stroke-width="1"/><circle cx="8" cy="7" r="2.2" fill="none" stroke="#666"/><circle cx="8" cy="7" r="0.8" fill="#666"/></svg><svg style="position:absolute;left:69px;top:1104px;overflow:visible" width="13" height="13" viewBox="0 0 13 13"><path d="M4 2 A5 5 0 1 0 6 11.5" fill="none" stroke="#666" stroke-width="1"/><circle cx="8.5" cy="4" r="1" fill="#666"/><path d="M6 6 H11 M8.5 5 V8 L6 12 M8.5 8 L11 12" fill="none" stroke="#666" stroke-width="1"/></svg><div style="position:absolute;left:84.00px;top:1106.83px;font-size:9.3px;line-height:9.3px;color:#555;white-space:nowrap;transform:scaleX(0.8731);transform-origin:0 0;">Accessibility: Investigate</div><svg style="position:absolute;left:689px;top:1105px;overflow:visible" width="12" height="11" viewBox="0 0 12 11"><path d="M0.5 0.5 H11.5 V7.5 H0.5 Z M4 10.5 H6" fill="none" stroke="#666" stroke-width="1"/><circle cx="8.5" cy="8" r="2.5" fill="#f3f2f1" stroke="#666"/></svg><div style="position:absolute;left:703.00px;top:1106.83px;font-size:9.3px;line-height:9.3px;color:#555;white-space:nowrap;transform:scaleX(0.8848);transform-origin:0 0;">Display Settings</div><div style="position:absolute;left:777px;top:1101.7px;width:31.6px;height:17.3px;background:#d2d2d2"></div><svg style="position:absolute;left:787px;top:1105px;overflow:visible" width="11" height="11" viewBox="0 0 11 11"><path d="M0.5 0.5 H10.5 V10.5 H0.5 Z M3.8 0.5 V10.5 M7.2 0.5 V10.5 M0.5 3.8 H10.5 M0.5 7.2 H10.5" fill="none" stroke="#444" stroke-width="1"/></svg><svg style="position:absolute;left:819.5px;top:1105px;overflow:visible" width="11" height="11" viewBox="0 0 11 11"><path d="M0.5 0.5 H10.5 V10.5 H0.5 Z M2.5 2.5 H8.5 V8.5 H2.5 Z M2.5 5.5 H8.5" fill="none" stroke="#555" stroke-width="1"/></svg><svg style="position:absolute;left:851px;top:1105px;overflow:visible" width="12" height="11" viewBox="0 0 12 11"><path d="M0.5 0.5 H11.5 V10.5 H0.5 Z M6 0.5 V6.5 H11.5 M3 0.5 V6.5 M0.5 6.5 H6" fill="none" stroke="#555" stroke-width="1"/></svg><div style="position:absolute;left:877px;top:1110px;width:6.5px;height:1px;background:#666"></div><div style="position:absolute;left:888px;top:1110px;width:79px;height:1px;background:#aaa"></div><div style="position:absolute;left:931px;top:1105.5px;width:4.5px;height:10px;background:#555"></div><div style="position:absolute;left:971px;top:1110px;width:6.5px;height:1px;background:#666"></div><div style="position:absolute;left:974px;top:1107px;width:1px;height:6.5px;background:#666"></div><div style="position:absolute;left:987.50px;top:1106.83px;font-size:9.3px;line-height:9.3px;color:#555;white-space:nowrap;transform:scaleX(0.8871);transform-origin:0 0;">145%</div><div style="position:absolute;left:0px;top:0px;width:1px;height:1119px;background:#8c8c8c"></div><div style="position:absolute;left:0px;top:0px;width:1026px;height:1px;background:#8c8c8c"></div><div style="position:absolute;left:1024px;top:0px;width:1px;height:1119px;background:#7a7a7a"></div></div><div class="win" style="left:1025px;width:1023px;background:#f3f2f1"><div style="position:absolute;left:0px;top:0px;width:1026px;height:28px;background:#217346"></div><div style="position:absolute;left:17.60px;top:9.97px;font-size:9.6px;line-height:9.6px;color:rgba(255,255,255,0.92);white-space:nowrap;transform:scaleX(0.9704);transform-origin:0 0;">AutoSave</div><div style="position:absolute;left:63px;top:7px;width:30px;height:14px;border:1px solid rgba(255,255,255,0.92);border-radius:7px"></div><div style="position:absolute;left:66.5px;top:10.5px;width:7px;height:7px;background:#fff;border-radius:50%"></div><div style="position:absolute;left:78.00px;top:10.57px;font-size:7.6px;line-height:7.6px;color:#fff;white-space:nowrap;transform:scaleX(1.0403);transform-origin:0 0;">Off</div><svg style="position:absolute;left:104px;top:8px;overflow:visible" width="14" height="14" viewBox="0 0 14 14"><path d="M2 2 L2 6 L6 6 M2.3 5.8 C4 2.5 9.5 2 11.5 5.5 C13 8.5 11 11 7 13.5" fill="none" stroke="#e8f0ea" stroke-width="1.1"/></svg><svg style="position:absolute;left:120px;top:12px;overflow:visible" width="7" height="5" viewBox="0 0 7 5"><path d="M1 1 L3.5 3.5 L6 1" fill="none" stroke="#e8f0ea" stroke-width="1.1"/></svg><svg style="position:absolute;left:134px;top:9px;overflow:visible" width="14" height="14" viewBox="0 0 14 14"><path d="M1 1 H11 V5 M1 1 V13 H6 M3 1 V5 H9 V1 M4 9 H8" fill="none" stroke="#e8f0ea" stroke-width="1.1"/><path d="M7 13 L13 6 L14 7 L8 14 Z" fill="none" stroke="#e8f0ea" stroke-width="1.1"/></svg><svg style="position:absolute;left:158px;top:8px;overflow:visible" width="13" height="13" viewBox="0 0 13 13"><path d="M12.3 0.8 L7.2 5.8 M5.2 4.6 L8.6 8 L6.5 10.2 L2.8 6.6 Z" fill="none" stroke="#e8f0ea" stroke-width="1.1"/><path d="M2.8 6.6 L0.8 10.2 L3 12.4 L6.5 10.2 Z" fill="#e8f0ea" stroke="#e8f0ea" stroke-width="0.8"/></svg><div style="position:absolute;left:178px;top:3px;width:1px;height:23px;background:rgba(255,255,255,0.25)"></div><div style="position:absolute;left:206px;top:3px;width:1px;height:23px;background:rgba(255,255,255,0.25)"></div><div style="position:absolute;left:280px;top:3px;width:1px;height:23px;background:rgba(255,255,255,0.25)"></div><div style="position:absolute;left:377px;top:3px;width:1px;height:23px;background:rgba(255,255,255,0.25)"></div><div style="position:absolute;left:501px;top:3px;width:1px;height:23px;background:rgba(255,255,255,0.25)"></div><svg style="position:absolute;left:187px;top:10px;overflow:visible" width="12" height="13" viewBox="0 0 12 13"><path d="M1 1 H7 L11 5 V12 H1 Z M7 1 V5 H11" fill="none" stroke="rgba(255,255,255,0.3)" stroke-width="1"/></svg><svg style="position:absolute;left:213px;top:8px;overflow:visible" width="15" height="14" viewBox="0 0 15 14"><path d="M1.5 9 V12.4 H13.6 V3.5 H8" fill="none" stroke="rgba(255,255,255,0.72)" stroke-width="1"/><path d="M7.5 8.2 L13.4 3.7" fill="none" stroke="rgba(255,255,255,0.72)" stroke-width="1"/><path d="M2.3 7.5 V2.6 Q2.3 1 3.8 1 Q5.3 1 5.3 2.6 V7.6 Q5.3 8.8 4.2 8.8 Q3.3 8.8 3.3 7.6 V3.5" fill="none" stroke="rgba(255,255,255,0.72)" stroke-width="1"/></svg><svg style="position:absolute;left:236.5px;top:8.5px;overflow:visible" width="14" height="14" viewBox="0 0 14 14"><path d="M6 1 H8.5 L12.3 4.8 V13 H1 V9.3" fill="none" stroke="rgba(255,255,255,0.72)" stroke-width="1"/><path d="M8.5 1 V4.8 H12.3" fill="none" stroke="rgba(255,255,255,0.72)" stroke-width="1"/><path d="M1.8 7.3 V2.3 Q1.8 0.8 3.2 0.8 Q4.6 0.8 4.6 2.3 V7.3 Q4.6 8.4 3.6 8.4 Q2.7 8.4 2.7 7.3 V3.2" fill="none" stroke="rgba(255,255,255,0.72)" stroke-width="1"/><text x="3.6" y="12" font-size="4.2" fill="rgba(255,255,255,0.72)" font-family="Liberation Sans" font-weight="bold">PDF</text></svg><svg style="position:absolute;left:259.5px;top:8.5px;overflow:visible" width="14" height="14" viewBox="0 0 14 14"><path d="M2.3 4.5 V1 H7.5 L10.5 4 M0.8 4.7 H13.3 V11.6 H0.8 Z" fill="none" stroke="rgba(255,255,255,0.72)" stroke-width="1"/><path d="M2.5 12.9 H11.5" stroke="rgba(255,255,255,0.72)" stroke-width="1.2"/></svg><svg style="position:absolute;left:288px;top:9px;overflow:visible" width="14" height="14" viewBox="0 0 14 14"><circle cx="6.6" cy="6.6" r="6.1" fill="none" stroke="rgba(255,255,255,0.72)" stroke-width="1"/><text x="3.2" y="9.6" font-size="8" font-style="italic" fill="rgba(255,255,255,0.72)" font-family="Liberation Serif">fx</text></svg><svg style="position:absolute;left:310.5px;top:8.5px;overflow:visible" width="14" height="14" viewBox="0 0 14 14"><path d="M1 1 H7.3 V5 H1 Z M1 5 V9.2 H4.5 M7.5 12.5 V9.6 M7.5 13.3 H13.3 V9 H11" fill="none" stroke="rgba(255,255,255,0.72)" stroke-width="1"/><path d="M4.3 7.3 L7.8 10.3 M7.8 8.4 V10.3 H5.9" fill="none" stroke="rgba(255,255,255,0.72)" stroke-width="1.1"/></svg><svg style="position:absolute;left:333.5px;top:8.5px;overflow:visible" width="14" height="14" viewBox="0 0 14 14"><path d="M4.5 5 H1 V1 H7.2 V3.8 M7 5 H13.3 V13.3 H7 Z M7 9.2 H13.3" fill="none" stroke="rgba(255,255,255,0.72)" stroke-width="1"/><path d="M4.3 4 L7.6 7.1 M7.6 5.2 V7.1 H5.7" fill="none" stroke="rgba(255,255,255,0.72)" stroke-width="1.1"/></svg><svg style="position:absolute;left:357px;top:8.5px;overflow:visible" width="14" height="14" viewBox="0 0 14 14"><path d="M2.3 3 V10 M0.8 8.5 L2.3 10.2 L3.8 8.5 M2.3 3 H9.8 M8.2 1.5 L9.9 3 L8.2 4.5 M8.5 8.8 L12.8 13.2 M12.8 8.8 L8.5 13.2" fill="none" stroke="rgba(255,255,255,0.72)" stroke-width="1"/><rect x="4.5" y="5" width="1.6" height="1.6" fill="rgba(255,255,255,0.72)"/></svg><div style="position:absolute;left:383px;top:9px;width:10px;height:10px;background:#fff"></div><svg style="position:absolute;left:383px;top:9px;overflow:visible" width="10" height="10" viewBox="0 0 10 10"><path d="M2 5 L4.2 7.3 L8.3 2.8" fill="none" stroke="#217346" stroke-width="1.3"/></svg><div style="position:absolute;left:397.70px;top:9.80px;font-size:9.8px;line-height:9.8px;color:rgba(255,255,255,0.92);white-space:nowrap;transform:scaleX(0.9914);transform-origin:0 0;">Automatic</div><div style="position:absolute;left:449px;top:9px;width:10px;height:10px;background:#fff"></div><div style="position:absolute;left:463.20px;top:9.80px;font-size:9.8px;line-height:9.8px;color:rgba(255,255,255,0.92);white-space:nowrap;transform:scaleX(0.9489);transform-origin:0 0;">Manual</div><svg style="position:absolute;left:506px;top:8px;overflow:visible" width="13" height="13" viewBox="0 0 13 13"><path d="M4 12 L1 9 L8 2 L12 6 L6 12 M3 7 L7 11" fill="none" stroke="#e8f0ea" stroke-width="1.1"/></svg><svg style="position:absolute;left:525px;top:12px;overflow:visible" width="6" height="5" viewBox="0 0 6 5"><path d="M1 1 L3 3 L5 1" fill="none" stroke="#e8f0ea" stroke-width="1.1"/></svg><div style="position:absolute;top:8.5px;font-size:11px;line-height:11px;color:rgba(255,255,255,0.92);white-space:nowrap;;left:542px;">&#187;</div><div style="position:absolute;left:576.00px;top:9.84px;font-size:10px;line-height:10px;color:rgba(255,255,255,0.92);white-space:nowrap;transform:scaleX(0.8929);transform-origin:0 0;">Excercise_Workbook.xlsx...</div><svg style="position:absolute;left:696px;top:12px;overflow:visible" width="8" height="5" viewBox="0 0 8 5"><path d="M0 0 H7 L3.5 4 Z" fill="#fff"/></svg><svg style="position:absolute;left:733px;top:8px;overflow:visible" width="13" height="13" viewBox="0 0 13 13"><circle cx="8.2" cy="4.8" r="3.8" fill="none" stroke="#e8f0ea" stroke-width="1.1"/><path d="M5.5 7.5 L1 12" fill="none" stroke="#e8f0ea" stroke-width="1.1"/></svg><div style="position:absolute;left:772.70px;top:9.78px;font-size:10.3px;line-height:10.3px;color:rgba(255,255,255,0.92);white-space:nowrap;transform:scaleX(0.9030);transform-origin:0 0;">Henrik Schiffner</div><div style="position:absolute;left:847.5px;top:4.5px;width:19.6px;height:19.6px;border-radius:50%;overflow:hidden"><svg style="position:absolute;left:0px;top:0px;overflow:visible" width="20" height="20" viewBox="0 0 20 20"><rect width="20" height="20" fill="#efe9e4"/><path d="M2 20 Q3 14.5 10 14.5 Q17 14.5 18 20 Z" fill="#f7f5f3"/><ellipse cx="10.3" cy="9.3" rx="4.6" ry="5.6" fill="#dcae90"/><path d="M5.6 6.8 Q6 2.2 10.5 2.4 Q15 2.6 15 7 Q13.5 4.8 10.3 4.9 Q7 5 5.6 6.8 Z" fill="#7a5a44"/><path d="M6.2 8.6 H9.5 V10.5 H6.2 Z M11 8.6 H14.4 V10.5 H11 Z M9.5 9.2 H11" fill="none" stroke="#4a3f3a" stroke-width="0.55"/><path d="M7.5 12.8 Q10.3 14.6 13 12.8" fill="none" stroke="#b98a70" stroke-width="0.9"/></svg></div><svg style="position:absolute;left:889px;top:10px;overflow:visible" width="11" height="9" viewBox="0 0 11 9"><path d="M0.5 0.5 H10.5 V8.5 H0.5 Z M0.5 2.5 H10.5 M5.5 4 V7 M4 5.5 L5.5 4 L7 5.5" fill="none" stroke="#e8f0ea" stroke-width="1.1"/></svg><div style="position:absolute;left:927px;top:14px;width:9px;height:1px;background:#e8f0ea"></div><div style="position:absolute;left:964px;top:10px;width:9px;height:9px;border:1px solid #e8f0ea"></div><svg style="position:absolute;left:1001px;top:10px;overflow:visible" width="9" height="9" viewBox="0 0 9 9"><path d="M0 0 L9 9 M9 0 L0 9" fill="none" stroke="#e8f0ea" stroke-width="1.1"/></svg><div style="position:absolute;left:14.50px;top:36.53px;font-size:10.6px;line-height:10.6px;color:#444;white-space:nowrap;transform:scaleX(0.9367);transform-origin:0 0;">File</div><div style="position:absolute;left:55.00px;top:36.53px;font-size:10.6px;line-height:10.6px;color:#262626;white-space:nowrap;transform:scaleX(0.9949);transform-origin:0 0;font-weight:bold;">Home</div><div style="position:absolute;left:54.5px;top:49.5px;width:30.299999999999997px;height:2.5px;background:#217346"></div><div style="position:absolute;left:107.00px;top:36.53px;font-size:10.6px;line-height:10.6px;color:#444;white-space:nowrap;transform:scaleX(0.9430);transform-origin:0 0;">Insert</div><div style="position:absolute;left:156.00px;top:36.53px;font-size:10.6px;line-height:10.6px;color:#444;white-space:nowrap;transform:scaleX(0.9407);transform-origin:0 0;">Page Layout</div><div style="position:absolute;left:235.50px;top:36.53px;font-size:10.6px;line-height:10.6px;color:#444;white-space:nowrap;transform:scaleX(0.9620);transform-origin:0 0;">Formulas</div><div style="position:absolute;left:300.00px;top:36.53px;font-size:10.6px;line-height:10.6px;color:#444;white-space:nowrap;transform:scaleX(0.9379);transform-origin:0 0;">Data</div><div style="position:absolute;left:343.00px;top:36.53px;font-size:10.6px;line-height:10.6px;color:#444;white-space:nowrap;transform:scaleX(0.9207);transform-origin:0 0;">Review</div><div style="position:absolute;left:397.00px;top:36.53px;font-size:10.6px;line-height:10.6px;color:#444;white-space:nowrap;transform:scaleX(1.0314);transform-origin:0 0;">View</div><div style="position:absolute;left:442.00px;top:36.53px;font-size:10.6px;line-height:10.6px;color:#444;white-space:nowrap;transform:scaleX(0.9727);transform-origin:0 0;">Developer</div><div style="position:absolute;left:512.00px;top:36.53px;font-size:10.6px;line-height:10.6px;color:#444;white-space:nowrap;transform:scaleX(1.0091);transform-origin:0 0;">Help</div><div style="position:absolute;left:556.00px;top:36.53px;font-size:10.6px;line-height:10.6px;color:#444;white-space:nowrap;transform:scaleX(0.8440);transform-origin:0 0;">PROFESSOR EXCEL</div><div style="position:absolute;left:847px;top:32px;width:53px;height:18px;background:#fff;border:1px solid #e1dfdd;border-radius:2px"></div><svg style="position:absolute;left:853px;top:36px;overflow:visible" width="11" height="10" viewBox="0 0 11 10"><path d="M1 3 V9 H9 V6 M3.5 6.5 C4 4 6 3 9 3 M7 1 L9.5 3 L7 5" fill="none" stroke="#217346" stroke-width="1.1"/></svg><div style="position:absolute;left:866.70px;top:36.36px;font-size:10.8px;line-height:10.8px;color:#217346;white-space:nowrap;transform:scaleX(0.8695);transform-origin:0 0;font-weight:bold;">Share</div><div style="position:absolute;left:908px;top:32px;width:78px;height:18px;background:#fff;border:1px solid #e1dfdd;border-radius:2px"></div><svg style="position:absolute;left:914px;top:36px;overflow:visible" width="10" height="10" viewBox="0 0 10 10"><path d="M0.5 0.5 H9.5 V6.5 H4 L1.5 9 V6.5 H0.5 Z" fill="none" stroke="#217346" stroke-width="1.1"/></svg><div style="position:absolute;left:927.00px;top:36.36px;font-size:10.8px;line-height:10.8px;color:#217346;white-space:nowrap;transform:scaleX(0.9317);transform-origin:0 0;font-weight:bold;">Comments</div><svg style="position:absolute;left:998px;top:34px;overflow:visible" width="14" height="14" viewBox="0 0 14 14"><circle cx="7" cy="7" r="6.2" fill="none" stroke="#444" stroke-width="1.2"/><circle cx="4.8" cy="5.3" r="0.9" fill="#444"/><circle cx="9.2" cy="5.3" r="0.9" fill="#444"/><path d="M4 8.5 Q7 11 10 8.5" fill="none" stroke="#444" stroke-width="1.1"/></svg><svg style="position:absolute;left:14.5px;top:59.5px;overflow:visible" width="23" height="25" viewBox="0 0 23 25"><path d="M1 3.5 H5 V2 H12 V3.5 H16 V22 H1 Z" fill="#fff" stroke="#e88b23" stroke-width="1.4"/><path d="M5.5 1 H11.5 V5 H5.5 Z" fill="#fff" stroke="#666" stroke-width="1.1"/><path d="M11 10 H22 V24 H11 Z" fill="#fff" stroke="#444" stroke-width="1.3"/></svg><div style="position:absolute;left:13.00px;top:87.89px;font-size:9.7px;line-height:9.7px;color:#3b3b3b;white-space:nowrap;transform:scaleX(0.8547);transform-origin:0 0;">Paste</div><svg style="position:absolute;left:21px;top:104px;overflow:visible" width="6" height="4" viewBox="0 0 6 4"><path d="M0.5 0.5 L3.0 3 L5.5 0.5" fill="none" stroke="#444" stroke-width="1"/></svg><svg style="position:absolute;left:44.5px;top:59.5px;overflow:visible" width="9" height="13.5" viewBox="0 0 9 13.5"><path d="M1.5 0.5 L6 9 M7.5 0.5 L3 9" stroke="#444" stroke-width="1"/><circle cx="2.3" cy="11" r="1.8" fill="none" stroke="#1f8ad2" stroke-width="1.1"/><circle cx="6.7" cy="11" r="1.8" fill="none" stroke="#1f8ad2" stroke-width="1.1"/></svg><svg style="position:absolute;left:42.3px;top:78.5px;overflow:visible" width="13.5" height="13.5" viewBox="0 0 13.5 13.5"><path d="M0.6 0.6 H6 V10.5 H0.6 Z" fill="#fff" stroke="#444" stroke-width="1.1"/><path d="M4 3.5 H9.5 L12.8 6.8 V13 H4 Z" fill="#fff" stroke="#444" stroke-width="1.1"/><path d="M6 9 H11 M6 11 H11" stroke="#777" stroke-width="0.7"/></svg><svg style="position:absolute;left:61.5px;top:86px;overflow:visible" width="6" height="4" viewBox="0 0 6 4"><path d="M0.5 0.5 L3.0 3 L5.5 0.5" fill="none" stroke="#444" stroke-width="1"/></svg><svg style="position:absolute;left:43px;top:97.5px;overflow:visible" width="13" height="13" viewBox="0 0 13 13"><path d="M8 1 L12 5 L9 6.5 L6.5 4 Z" fill="#fff" stroke="#444" stroke-width="1"/><path d="M7 4.5 L1 9 L4.5 12.5 L9 6.5" fill="#f6c089" stroke="#e8822b" stroke-width="1.1"/></svg><div style="position:absolute;left:13.70px;top:120.01px;font-size:9.2px;line-height:9.2px;color:#555;white-space:nowrap;transform:scaleX(0.9167);transform-origin:0 0;">Clipboard</div><svg style="position:absolute;left:67.2px;top:120.5px;overflow:visible" width="7" height="7" viewBox="0 0 7 7"><path d="M0.5 3 V0.5 H6.5 V6.5 H3.5 M2 2 L6 6 M3.5 6 H6 V3.5" fill="none" stroke="#666" stroke-width="0.9"/></svg><div style="position:absolute;left:76.6px;top:57px;width:1px;height:70px;background:#d2d0ce"></div><div style="position:absolute;left:83.4px;top:63.8px;width:92.5px;height:18.2px;background:#fff;border:1px solid #d6d4d2"></div><div style="position:absolute;left:176.2px;top:63.8px;width:33.6px;height:18.2px;background:#fff;border:1px solid #d6d4d2"></div><div style="position:absolute;left:84.70px;top:69.19px;font-size:9.7px;line-height:9.7px;color:#3b3b3b;white-space:nowrap;transform:scaleX(0.9494);transform-origin:0 0;">Calibri</div><svg style="position:absolute;left:168.5px;top:71.5px;overflow:visible" width="6.5" height="4" viewBox="0 0 6.5 4"><path d="M0.5 0.5 L3.25 3 L6.0 0.5" fill="none" stroke="#444" stroke-width="1"/></svg><div style="position:absolute;left:178.00px;top:69.19px;font-size:9.7px;line-height:9.7px;color:#3b3b3b;white-space:nowrap;transform:scaleX(0.9335);transform-origin:0 0;">11</div><svg style="position:absolute;left:202.3px;top:71.5px;overflow:visible" width="6.5" height="4" viewBox="0 0 6.5 4"><path d="M0.5 0.5 L3.25 3 L6.0 0.5" fill="none" stroke="#444" stroke-width="1"/></svg><div style="position:absolute;left:213.00px;top:65.20px;font-size:13px;line-height:13px;color:#333;white-space:nowrap;transform:scaleX(1.0379);transform-origin:0 0;">A</div><svg style="position:absolute;left:222.5px;top:65px;overflow:visible" width="4" height="3" viewBox="0 0 4 3"><path d="M0.5 2.5 L2 0.8 L3.5 2.5" fill="none" stroke="#1f8ad2" stroke-width="0.9"/></svg><div style="position:absolute;left:231.00px;top:66.89px;font-size:11px;line-height:11px;color:#333;white-space:nowrap;transform:scaleX(1.1585);transform-origin:0 0;">A</div><svg style="position:absolute;left:239.5px;top:65.5px;overflow:visible" width="4" height="3" viewBox="0 0 4 3"><path d="M0.5 0.5 L2 2.2 L3.5 0.5" fill="none" stroke="#1f8ad2" stroke-width="0.9"/></svg><div style="position:absolute;left:88.40px;top:92.39px;font-size:11px;line-height:11px;color:#333;white-space:nowrap;transform:scaleX(0.8686);transform-origin:0 0;font-weight:bold;">B</div><div style="position:absolute;left:105.90px;top:91.97px;font-size:11.5px;line-height:11.5px;color:#333;white-space:nowrap;transform:scaleX(1.7528);transform-origin:0 0;font-style:italic;font-family:'Liberation Serif';">I</div><div style="position:absolute;left:121.40px;top:92.39px;font-size:11px;line-height:11px;color:#333;white-space:nowrap;transform:scaleX(0.9441);transform-origin:0 0;">U</div><div style="position:absolute;left:121.4px;top:102.5px;width:7.5px;height:1px;background:#333"></div><svg style="position:absolute;left:136.5px;top:97px;overflow:visible" width="6" height="4" viewBox="0 0 6 4"><path d="M0.5 0.5 L3.0 3 L5.5 0.5" fill="none" stroke="#444" stroke-width="1"/></svg><div style="position:absolute;left:148.8px;top:90.6px;width:1px;height:16.2px;background:#d9d7d5"></div><svg style="position:absolute;left:153.2px;top:91.8px;overflow:visible" width="12.5" height="12" viewBox="0 0 12.5 12"><path d="M0.6 0.6 H11.9 V11.4 H0.6 Z M6.25 0.6 V11.4 M0.6 6 H11.9" fill="none" stroke="#999" stroke-width="0.9"/><path d="M0 11.4 H12.5" stroke="#333" stroke-width="1.3"/></svg><svg style="position:absolute;left:171.5px;top:97px;overflow:visible" width="6" height="4" viewBox="0 0 6 4"><path d="M0.5 0.5 L3.0 3 L5.5 0.5" fill="none" stroke="#444" stroke-width="1"/></svg><div style="position:absolute;left:183px;top:90.6px;width:1px;height:16.2px;background:#d9d7d5"></div><svg style="position:absolute;left:188px;top:91px;overflow:visible" width="13" height="10.5" viewBox="0 0 13 10.5"><path d="M2 5 L6.5 0.8 L10.5 4.8 L6 9.2 Z" fill="#fff" stroke="#444" stroke-width="1.1"/><path d="M10 3 Q12.5 4 11.5 7" fill="none" stroke="#1f8ad2" stroke-width="1.2"/></svg><div style="position:absolute;left:188px;top:101.2px;width:12.5px;height:3.7px;background:#ffff00"></div><svg style="position:absolute;left:205px;top:97px;overflow:visible" width="6" height="4" viewBox="0 0 6 4"><path d="M0.5 0.5 L3.0 3 L5.5 0.5" fill="none" stroke="#444" stroke-width="1"/></svg><div style="position:absolute;left:217.80px;top:90.92px;font-size:12.5px;line-height:12.5px;color:#333;white-space:nowrap;transform:scaleX(1.4032);transform-origin:0 0;">A</div><div style="position:absolute;left:217.3px;top:101.2px;width:12.5px;height:3.7px;background:#ff0000"></div><svg style="position:absolute;left:234.8px;top:97px;overflow:visible" width="6" height="4" viewBox="0 0 6 4"><path d="M0.5 0.5 L3.0 3 L5.5 0.5" fill="none" stroke="#444" stroke-width="1"/></svg><div style="position:absolute;left:148.80px;top:120.01px;font-size:9.2px;line-height:9.2px;color:#555;white-space:nowrap;transform:scaleX(0.8800);transform-origin:0 0;">Font</div><svg style="position:absolute;left:241px;top:120.5px;overflow:visible" width="7" height="7" viewBox="0 0 7 7"><path d="M0.5 3 V0.5 H6.5 V6.5 H3.5 M2 2 L6 6 M3.5 6 H6 V3.5" fill="none" stroke="#666" stroke-width="0.9"/></svg><div style="position:absolute;left:250.3px;top:57px;width:1px;height:70px;background:#d2d0ce"></div><svg style="position:absolute;left:259.8px;top:66px;overflow:visible" width="11.5" height="10.600000000000001" viewBox="0 0 11.5 10.600000000000001"><path d="M0.00 0.60 H11.50 M1.25 3.80 H10.25 M0.00 7.00 H11.50 " stroke="#444" stroke-width="1.2"/></svg><svg style="position:absolute;left:277px;top:68.5px;overflow:visible" width="11.5" height="10.600000000000001" viewBox="0 0 11.5 10.600000000000001"><path d="M0.00 0.60 H11.50 M1.25 3.80 H10.25 M0.00 7.00 H11.50 " stroke="#444" stroke-width="1.2"/></svg><div style="position:absolute;left:290.9px;top:63.8px;width:17.1px;height:18.5px;background:#c8c6c4"></div><svg style="position:absolute;left:294px;top:72px;overflow:visible" width="11.5" height="10.600000000000001" viewBox="0 0 11.5 10.600000000000001"><path d="M0.00 0.60 H11.50 M1.25 3.80 H10.25 M0.00 7.00 H11.50 " stroke="#444" stroke-width="1.2"/></svg><div style="position:absolute;left:310.5px;top:64px;width:1px;height:18px;background:#d9d7d5"></div><svg style="position:absolute;left:315.4px;top:65.5px;overflow:visible" width="14" height="13" viewBox="0 0 14 13"><text x="0" y="7" font-size="7" fill="#444" font-family="Liberation Sans" transform="rotate(-30 4 5)">ab</text><path d="M4 12 L12.5 3.5 M9.5 3.5 H12.5 V6.5" fill="none" stroke="#1f8ad2" stroke-width="1.2"/></svg><svg style="position:absolute;left:331.5px;top:70.5px;overflow:visible" width="5.5" height="4" viewBox="0 0 5.5 4"><path d="M0.5 0.5 L2.75 3 L5.0 0.5" fill="none" stroke="#444" stroke-width="1"/></svg><div style="position:absolute;left:350.6px;top:62px;width:1px;height:48px;background:#e1dfdd"></div><svg style="position:absolute;left:358px;top:66.5px;overflow:visible" width="12" height="13" viewBox="0 0 12 13"><text x="0" y="6" font-size="6.5" fill="#444" font-family="Liberation Sans">ab</text><text x="0" y="12.5" font-size="6.5" fill="#444" font-family="Liberation Sans">c</text><path d="M6 10.5 H9.5 Q11.5 10.5 11.5 8 Q11.5 6 9 6 M7.5 8.8 L5.8 10.5 L7.5 12.2" fill="none" stroke="#1f8ad2" stroke-width="1.1"/></svg><div style="position:absolute;left:371.90px;top:69.69px;font-size:9.7px;line-height:9.7px;color:#3b3b3b;white-space:nowrap;transform:scaleX(0.9444);transform-origin:0 0;">Wrap Text</div><svg style="position:absolute;left:259.8px;top:92px;overflow:visible" width="11.5" height="13.8" viewBox="0 0 11.5 13.8"><path d="M0.00 0.60 H11.50 M0.00 3.80 H8.00 M0.00 7.00 H11.50 M0.00 10.20 H8.00 " stroke="#444" stroke-width="1.2"/></svg><svg style="position:absolute;left:277px;top:92px;overflow:visible" width="11.5" height="13.8" viewBox="0 0 11.5 13.8"><path d="M0.00 0.60 H11.50 M1.75 3.80 H9.75 M0.00 7.00 H11.50 M1.75 10.20 H9.75 " stroke="#444" stroke-width="1.2"/></svg><svg style="position:absolute;left:294.2px;top:92px;overflow:visible" width="11.5" height="13.8" viewBox="0 0 11.5 13.8"><path d="M0.00 0.60 H11.50 M3.50 3.80 H11.50 M0.00 7.00 H11.50 M3.50 10.20 H11.50 " stroke="#444" stroke-width="1.2"/></svg><div style="position:absolute;left:310.5px;top:90px;width:1px;height:17px;background:#d9d7d5"></div><svg style="position:absolute;left:315.8px;top:92px;overflow:visible" width="12" height="11" viewBox="0 0 12 11"><path d="M0 0.6 H12 M5.5 4 H12 M5.5 7 H12 M0 10.4 H12" stroke="#444" stroke-width="1.1"/><path d="M4.5 5.5 H0.8 M2.5 3.8 L0.8 5.5 L2.5 7.2" fill="none" stroke="#1f8ad2" stroke-width="1.1"/></svg><svg style="position:absolute;left:332.6px;top:92px;overflow:visible" width="12" height="11" viewBox="0 0 12 11"><path d="M0 0.6 H12 M5.5 4 H12 M5.5 7 H12 M0 10.4 H12" stroke="#444" stroke-width="1.1"/><path d="M0.5 5.5 H4.2 M2.5 3.8 L4.2 5.5 L2.5 7.2" fill="none" stroke="#1f8ad2" stroke-width="1.1"/></svg><svg style="position:absolute;left:356px;top:91.8px;overflow:visible" width="12.6" height="12.2" viewBox="0 0 12.6 12.2"><path d="M0.6 0.6 H12 V11.6 H0.6 Z M0.6 3 H12 M0.6 9.2 H12" fill="#fff" stroke="#444" stroke-width="1"/><rect x="1.5" y="3.5" width="9.6" height="5.2" fill="#cfe6f7"/><path d="M2.5 6.1 H10 M4 4.6 L2.5 6.1 L4 7.6 M8.5 4.6 L10 6.1 L8.5 7.6" fill="none" stroke="#1f8ad2" stroke-width="1"/></svg><div style="position:absolute;left:371.90px;top:94.19px;font-size:9.7px;line-height:9.7px;color:#3b3b3b;white-space:nowrap;transform:scaleX(0.9668);transform-origin:0 0;">Merge &amp; Center</div><svg style="position:absolute;left:446px;top:97.5px;overflow:visible" width="6" height="4" viewBox="0 0 6 4"><path d="M0.5 0.5 L3.0 3 L5.5 0.5" fill="none" stroke="#444" stroke-width="1"/></svg><div style="position:absolute;left:330.20px;top:120.01px;font-size:9.2px;line-height:9.2px;color:#555;white-space:nowrap;transform:scaleX(0.9386);transform-origin:0 0;">Alignment</div><svg style="position:absolute;left:452.8px;top:120.5px;overflow:visible" width="7" height="7" viewBox="0 0 7 7"><path d="M0.5 3 V0.5 H6.5 V6.5 H3.5 M2 2 L6 6 M3.5 6 H6 V3.5" fill="none" stroke="#666" stroke-width="0.9"/></svg><div style="position:absolute;left:462.7px;top:57px;width:1px;height:70px;background:#d2d0ce"></div><div style="position:absolute;left:469.2px;top:63.5px;width:102.2px;height:18.8px;background:#fff;border:1px solid #d6d4d2"></div><div style="position:absolute;left:470.80px;top:69.69px;font-size:9.7px;line-height:9.7px;color:#3b3b3b;white-space:nowrap;transform:scaleX(0.9012);transform-origin:0 0;">General</div><svg style="position:absolute;left:563.5px;top:71.5px;overflow:visible" width="6.5" height="4" viewBox="0 0 6.5 4"><path d="M0.5 0.5 L3.25 3 L6.0 0.5" fill="none" stroke="#444" stroke-width="1"/></svg><div style="position:absolute;left:473.30px;top:93.04px;font-size:12px;line-height:12px;color:#333;white-space:nowrap;transform:scaleX(1.1088);transform-origin:0 0;">$</div><svg style="position:absolute;left:488.8px;top:97.5px;overflow:visible" width="5.5" height="4" viewBox="0 0 5.5 4"><path d="M0.5 0.5 L2.75 3 L5.0 0.5" fill="none" stroke="#444" stroke-width="1"/></svg><div style="position:absolute;left:500.30px;top:93.04px;font-size:12px;line-height:12px;color:#333;white-space:nowrap;transform:scaleX(1.1528);transform-origin:0 0;">%</div><svg style="position:absolute;left:520.7px;top:93.7px;overflow:visible" width="7" height="9.5" viewBox="0 0 7 9.5"><path d="M3.3 0.5 C5.3 0.5 6.2 2 6.2 3.6 C6.2 6.3 4.5 8.3 1.5 9.2 L1.2 8.4 C3 7.6 3.9 6.6 4.1 5.6 C2 5.8 0.6 4.6 0.6 3.1 C0.6 1.6 1.8 0.5 3.3 0.5 Z" fill="#333"/></svg><div style="position:absolute;left:534.6px;top:90px;width:1px;height:17px;background:#d9d7d5"></div><svg style="position:absolute;left:539.5px;top:92px;overflow:visible" width="13" height="13" viewBox="0 0 13 13"><text x="5.5" y="5.5" font-size="6" fill="#444" font-family="Liberation Sans">0</text><text x="3" y="12.5" font-size="6" fill="#444" font-family="Liberation Sans">.00</text><path d="M5.5 3.5 H0.8 M2.5 1.8 L0.8 3.5 L2.5 5.2" fill="none" stroke="#1f8ad2" stroke-width="1"/></svg><svg style="position:absolute;left:555.9px;top:92px;overflow:visible" width="13" height="13" viewBox="0 0 13 13"><text x="5" y="5.5" font-size="6" fill="#444" font-family="Liberation Sans">.00</text><text x="7" y="12.5" font-size="6" fill="#444" font-family="Liberation Sans">.0</text><path d="M0.5 10 H6 M4.3 8.3 L6 10 L4.3 11.7" fill="none" stroke="#1f8ad2" stroke-width="1"/></svg><div style="position:absolute;left:497.80px;top:120.01px;font-size:9.2px;line-height:9.2px;color:#555;white-space:nowrap;transform:scaleX(0.9260);transform-origin:0 0;">Number</div><svg style="position:absolute;left:568.2px;top:120.5px;overflow:visible" width="7" height="7" viewBox="0 0 7 7"><path d="M0.5 3 V0.5 H6.5 V6.5 H3.5 M2 2 L6 6 M3.5 6 H6 V3.5" fill="none" stroke="#666" stroke-width="0.9"/></svg><div style="position:absolute;left:577.3px;top:57px;width:1px;height:70px;background:#d2d0ce"></div><svg style="position:absolute;left:603px;top:62px;overflow:visible" width="23" height="18.5" viewBox="0 0 23 18.5"><path d="M0.6 0.6 H22 V17.9 H0.6 Z" fill="#fff" stroke="#444" stroke-width="1.1"/><rect x="4.5" y="1" width="10.5" height="5.2" fill="#f28b96"/><rect x="4.5" y="12.3" width="12" height="5.2" fill="#f28b96"/><rect x="4.5" y="6.5" width="6.5" height="5.2" fill="#6fb4e6"/><path d="M4.5 0.6 V17.9 M15.5 0.6 V17.9 M18.8 0.6 V17.9 M0.6 6.3 H22 M0.6 12 H22" fill="none" stroke="#444" stroke-width="0.9"/><path d="M4.5 1 V17.5 M15 1 V6.3 M16.5 12 V17.5" stroke="#e8454f" stroke-width="1"/></svg><div style="position:absolute;left:589.60px;top:87.69px;font-size:9.7px;line-height:9.7px;color:#3b3b3b;white-space:nowrap;transform:scaleX(1.0034);transform-origin:0 0;">Conditional</div><div style="position:absolute;left:586.10px;top:99.99px;font-size:9.7px;line-height:9.7px;color:#3b3b3b;white-space:nowrap;transform:scaleX(0.9987);transform-origin:0 0;">Formatting</div><svg style="position:absolute;left:636px;top:104px;overflow:visible" width="5.5" height="4" viewBox="0 0 5.5 4"><path d="M0.5 0.5 L2.75 3 L5.0 0.5" fill="none" stroke="#444" stroke-width="1"/></svg><svg style="position:absolute;left:655.9px;top:62px;overflow:visible" width="25" height="22" viewBox="0 0 25 22"><path d="M0.6 0.6 H22 V17.9 H0.6 Z M0.6 6.3 H22 M0.6 12 H22 M7.6 0.6 V17.9 M14.8 0.6 V17.9" fill="#fff" stroke="#444" stroke-width="1"/><rect x="7.6" y="6.3" width="14.4" height="11.6" fill="#8cc3ec" stroke="#1f8ad2" stroke-width="1"/><path d="M23.5 6 L14 16" stroke="#444" stroke-width="3.2"/><path d="M23.5 6 L14 16" stroke="#fff" stroke-width="1.6"/><path d="M14.5 15 Q13 19 8 21.5 Q12 22 15.5 19 Q17 17 16 16 Z" fill="#1f8ad2"/></svg><div style="position:absolute;left:645.90px;top:87.69px;font-size:9.7px;line-height:9.7px;color:#3b3b3b;white-space:nowrap;transform:scaleX(0.9528);transform-origin:0 0;">Format as</div><div style="position:absolute;left:651.80px;top:99.99px;font-size:9.7px;line-height:9.7px;color:#3b3b3b;white-space:nowrap;transform:scaleX(0.9099);transform-origin:0 0;">Table</div><svg style="position:absolute;left:676px;top:104px;overflow:visible" width="5.5" height="4" viewBox="0 0 5.5 4"><path d="M0.5 0.5 L2.75 3 L5.0 0.5" fill="none" stroke="#444" stroke-width="1"/></svg><svg style="position:absolute;left:696.9px;top:62px;overflow:visible" width="25" height="22" viewBox="0 0 25 22"><path d="M0.6 0.6 H22 V17.9 H0.6 Z M0.6 3.5 H22 M0.6 15 H22 M3.8 0.6 V17.9 M19 0.6 V17.9" fill="#fff" stroke="#444" stroke-width="1"/><rect x="4.3" y="4" width="14.2" height="10.5" fill="#8cc3ec" stroke="#1f8ad2" stroke-width="1"/><path d="M23.5 6 L14 16" stroke="#444" stroke-width="3.2"/><path d="M23.5 6 L14 16" stroke="#fff" stroke-width="1.6"/><path d="M14.5 15 Q13 19 8 21.5 Q12 22 15.5 19 Q17 17 16 16 Z" fill="#1f8ad2"/></svg><div style="position:absolute;left:700.40px;top:87.69px;font-size:9.7px;line-height:9.7px;color:#3b3b3b;white-space:nowrap;transform:scaleX(0.9096);transform-origin:0 0;">Cell</div><div style="position:absolute;left:691.60px;top:99.99px;font-size:9.7px;line-height:9.7px;color:#3b3b3b;white-space:nowrap;transform:scaleX(0.8859);transform-origin:0 0;">Styles</div><svg style="position:absolute;left:718.7px;top:104px;overflow:visible" width="5.5" height="4" viewBox="0 0 5.5 4"><path d="M0.5 0.5 L2.75 3 L5.0 0.5" fill="none" stroke="#444" stroke-width="1"/></svg><div style="position:absolute;left:644.10px;top:120.01px;font-size:9.2px;line-height:9.2px;color:#555;white-space:nowrap;transform:scaleX(0.8422);transform-origin:0 0;">Styles</div><div style="position:absolute;left:732.6px;top:57px;width:1px;height:70px;background:#d2d0ce"></div><svg style="position:absolute;left:741.4px;top:59px;overflow:visible" width="13" height="11.5" viewBox="0 0 13 11.5"><path d="M0.6 0.6 H12.4 V10.6 H0.6 Z M0.6 3.5 H12.4 M0.6 7.5 H12.4 M3.5 0.6 V10.6 M9.5 0.6 V10.6" fill="#fff" stroke="#444" stroke-width="0.9"/><rect x="3.5" y="3.5" width="9" height="4" fill="#8cc3ec"/><path d="M6 5.5 H0.5 M2.3 3.7 L0.5 5.5 L2.3 7.3" fill="none" stroke="#1f8ad2" stroke-width="1.1"/><path d="M9.5 1 V10.5" stroke="#1f8ad2" stroke-width="1.5"/></svg><div style="position:absolute;left:756.60px;top:60.69px;font-size:9.7px;line-height:9.7px;color:#3b3b3b;white-space:nowrap;transform:scaleX(0.9687);transform-origin:0 0;">Insert</div><svg style="position:absolute;left:787.8px;top:64.5px;overflow:visible" width="5.5" height="4" viewBox="0 0 5.5 4"><path d="M0.5 0.5 L2.75 3 L5.0 0.5" fill="none" stroke="#444" stroke-width="1"/></svg><svg style="position:absolute;left:741.4px;top:77px;overflow:visible" width="13" height="11.5" viewBox="0 0 13 11.5"><path d="M0.6 0.6 H12.4 V10.6 H0.6 Z M0.6 3.5 H12.4 M0.6 7.5 H12.4 M3.5 0.6 V10.6 M9.5 0.6 V10.6" fill="#fff" stroke="#444" stroke-width="0.9"/><rect x="3.5" y="3.5" width="4.5" height="4" fill="#8cc3ec" stroke="#1f8ad2" stroke-width="1"/><path d="M9.3 3.5 L12.5 7.5 M12.5 3.5 L9.3 7.5" stroke="#e8454f" stroke-width="1.1"/></svg><div style="position:absolute;left:756.60px;top:78.89px;font-size:9.7px;line-height:9.7px;color:#3b3b3b;white-space:nowrap;transform:scaleX(0.9415);transform-origin:0 0;">Delete</div><svg style="position:absolute;left:790.8px;top:82.5px;overflow:visible" width="5.5" height="4" viewBox="0 0 5.5 4"><path d="M0.5 0.5 L2.75 3 L5.0 0.5" fill="none" stroke="#444" stroke-width="1"/></svg><svg style="position:absolute;left:741.4px;top:94.8px;overflow:visible" width="13" height="12.5" viewBox="0 0 13 12.5"><path d="M0.6 1.6 H12.4 V11.9 H0.6 Z M0.6 4.5 H12.4 M0.6 9 H12.4 M3.5 1.6 V11.9 M9.5 1.6 V11.9" fill="#fff" stroke="#444" stroke-width="0.9"/><rect x="3.5" y="4.5" width="6" height="4.5" fill="#8cc3ec" stroke="#1f8ad2" stroke-width="1"/><path d="M2 0.5 H11" stroke="#1f8ad2" stroke-width="1"/></svg><div style="position:absolute;left:756.60px;top:96.99px;font-size:9.7px;line-height:9.7px;color:#3b3b3b;white-space:nowrap;transform:scaleX(0.9863);transform-origin:0 0;">Format</div><svg style="position:absolute;left:789px;top:100.5px;overflow:visible" width="5.5" height="4" viewBox="0 0 5.5 4"><path d="M0.5 0.5 L2.75 3 L5.0 0.5" fill="none" stroke="#444" stroke-width="1"/></svg><div style="position:absolute;left:760.70px;top:120.01px;font-size:9.2px;line-height:9.2px;color:#555;white-space:nowrap;transform:scaleX(0.8607);transform-origin:0 0;">Cells</div><div style="position:absolute;left:807.4px;top:57px;width:1px;height:70px;background:#d2d0ce"></div><svg style="position:absolute;left:817.4px;top:59px;overflow:visible" width="10" height="11.5" viewBox="0 0 10 11.5"><path d="M9.5 1.8 V0.6 H0.8 L5.3 5.75 L0.8 10.9 H9.5 V9.7" fill="none" stroke="#444" stroke-width="1.2"/></svg><svg style="position:absolute;left:833.3px;top:64px;overflow:visible" width="5.5" height="4" viewBox="0 0 5.5 4"><path d="M0.5 0.5 L2.75 3 L5.0 0.5" fill="none" stroke="#444" stroke-width="1"/></svg><svg style="position:absolute;left:816.1px;top:77.3px;overflow:visible" width="13" height="11.2" viewBox="0 0 13 11.2"><path d="M0.6 0.6 H12.4 V10.6 H0.6 Z" fill="#fff" stroke="#444" stroke-width="1.1"/><path d="M0.6 1.6 H12.4" stroke="#444" stroke-width="1.6"/><path d="M6.5 3.5 V8.5 M4.5 6.5 L6.5 8.5 L8.5 6.5" fill="none" stroke="#1f8ad2" stroke-width="1.1"/></svg><svg style="position:absolute;left:831.6px;top:81.5px;overflow:visible" width="5.5" height="4" viewBox="0 0 5.5 4"><path d="M0.5 0.5 L2.75 3 L5.0 0.5" fill="none" stroke="#444" stroke-width="1"/></svg><svg style="position:absolute;left:816.1px;top:95px;overflow:visible" width="12.5" height="11.5" viewBox="0 0 12.5 11.5"><path d="M0.8 7 L7 0.8 L11.7 5.5 L5.5 11 Z" fill="#fff" stroke="#b146c2" stroke-width="1.2"/><path d="M0.8 7 L3.8 4 L8.3 8.5 L5.5 11 Z" fill="#c36ad1"/></svg><svg style="position:absolute;left:831.6px;top:100px;overflow:visible" width="5.5" height="4" viewBox="0 0 5.5 4"><path d="M0.5 0.5 L2.75 3 L5.0 0.5" fill="none" stroke="#444" stroke-width="1"/></svg><svg style="position:absolute;left:849px;top:60px;overflow:visible" width="23.5" height="22" viewBox="0 0 23.5 22"><text x="0.3" y="9.5" font-size="11" fill="#1f8ad2" font-family="Liberation Sans">A</text><text x="0.5" y="21.5" font-size="11" fill="#444" font-family="Liberation Sans">Z</text><path d="M10 5 H22.5 L18 10.5 V17 H14.5 V10.5 Z" fill="#fff" stroke="#444" stroke-width="1.1"/></svg><div style="position:absolute;left:846.60px;top:87.89px;font-size:9.7px;line-height:9.7px;color:#3b3b3b;white-space:nowrap;transform:scaleX(1.0165);transform-origin:0 0;">Sort &amp;</div><div style="position:absolute;left:845.70px;top:100.39px;font-size:9.7px;line-height:9.7px;color:#3b3b3b;white-space:nowrap;transform:scaleX(0.9093);transform-origin:0 0;">Filter</div><svg style="position:absolute;left:868.6px;top:104.5px;overflow:visible" width="5.5" height="4" viewBox="0 0 5.5 4"><path d="M0.5 0.5 L2.75 3 L5.0 0.5" fill="none" stroke="#444" stroke-width="1"/></svg><svg style="position:absolute;left:882.5px;top:59px;overflow:visible" width="26" height="24.5" viewBox="0 0 26 24.5"><circle cx="15.5" cy="9.1" r="8.4" fill="#fff" stroke="#444" stroke-width="1.2"/><path d="M9.5 15 L1 23.6" stroke="#444" stroke-width="1.2"/></svg><div style="position:absolute;left:881.40px;top:87.89px;font-size:9.7px;line-height:9.7px;color:#3b3b3b;white-space:nowrap;transform:scaleX(0.9880);transform-origin:0 0;">Find &amp;</div><div style="position:absolute;left:878.60px;top:100.39px;font-size:9.7px;line-height:9.7px;color:#3b3b3b;white-space:nowrap;transform:scaleX(0.9013);transform-origin:0 0;">Select</div><svg style="position:absolute;left:906.2px;top:104.5px;overflow:visible" width="5.5" height="4" viewBox="0 0 5.5 4"><path d="M0.5 0.5 L2.75 3 L5.0 0.5" fill="none" stroke="#444" stroke-width="1"/></svg><div style="position:absolute;left:850.60px;top:120.01px;font-size:9.2px;line-height:9.2px;color:#555;white-space:nowrap;transform:scaleX(0.9100);transform-origin:0 0;">Editing</div><div style="position:absolute;left:920.6px;top:57px;width:1px;height:70px;background:#d2d0ce"></div><svg style="position:absolute;left:936.5px;top:59.5px;overflow:visible" width="18" height="23" viewBox="0 0 18 23"><path d="M7 0.8 H16.5 L11.5 8.2 H17 L2 22.2 L6.5 12.5 H1 Z" fill="#8cc3ec" stroke="#1f8ad2" stroke-width="1.2" stroke-linejoin="round"/></svg><div style="position:absolute;left:936.30px;top:87.89px;font-size:9.7px;line-height:9.7px;color:#3b3b3b;white-space:nowrap;transform:scaleX(0.9371);transform-origin:0 0;">Data</div><div style="position:absolute;left:929.00px;top:100.39px;font-size:9.7px;line-height:9.7px;color:#3b3b3b;white-space:nowrap;transform:scaleX(0.9191);transform-origin:0 0;">Analysis</div><div style="position:absolute;left:930.10px;top:120.01px;font-size:9.2px;line-height:9.2px;color:#555;white-space:nowrap;transform:scaleX(0.8757);transform-origin:0 0;">Analysis</div><div style="position:absolute;left:970.7px;top:57px;width:1px;height:70px;background:#d2d0ce"></div><svg style="position:absolute;left:1008px;top:121px;overflow:visible" width="10" height="6" viewBox="0 0 10 6"><path d="M1 5 L5 1 L9 5" fill="none" stroke="#555" stroke-width="1.1"/></svg><div style="position:absolute;left:0px;top:130px;width:1026px;height:36px;background:#e6e6e6"></div><div style="position:absolute;left:0px;top:130px;width:1026px;height:5px;background:linear-gradient(#d4d4d4,#e6e6e6)"></div><div style="position:absolute;left:5px;top:139px;width:200px;height:18px;background:#fff;box-shadow:0 0 0 0.5px #dadada"></div><div style="position:absolute;top:142.5px;font-size:11.5px;line-height:11.5px;color:#262626;white-space:nowrap;;left:8.5px;transform:scaleX(0.92);transform-origin:0 0;">A1</div><svg style="position:absolute;left:196px;top:147px;overflow:visible" width="6" height="3" viewBox="0 0 6 3"><path d="M0 0 H5 L2.5 3 Z" fill="#555"/></svg><div style="position:absolute;left:217px;top:144px;width:1.2px;height:1.2px;background:#888"></div><div style="position:absolute;left:217px;top:148px;width:1.2px;height:1.2px;background:#888"></div><div style="position:absolute;left:217px;top:152px;width:1.2px;height:1.2px;background:#888"></div><div style="position:absolute;left:230.5px;top:139px;width:87px;height:18px;background:#fff;box-shadow:0 0 0 0.5px #dadada"></div><svg style="position:absolute;left:240px;top:143px;overflow:visible" width="10" height="10" viewBox="0 0 10 10"><path d="M1 1 L9 9 M9 1 L1 9" stroke="#9a9a9a" stroke-width="1"/></svg><svg style="position:absolute;left:269px;top:144px;overflow:visible" width="11" height="9" viewBox="0 0 11 9"><path d="M1 4.5 L4 8 L10 1" fill="none" stroke="#9a9a9a" stroke-width="1.2"/></svg><div style="position:absolute;top:141px;font-size:13px;line-height:13px;color:#555;white-space:nowrap;font-family:'Liberation Serif';left:297px;"><i>f</i><i style='font-size:10px'>x</i></div><div style="position:absolute;left:320px;top:139px;width:700px;height:18px;background:#fff;box-shadow:0 0 0 0.5px #dadada"></div><svg style="position:absolute;left:1009px;top:146px;overflow:visible" width="8" height="5" viewBox="0 0 8 5"><path d="M1 1 L4 4 L7 1" fill="none" stroke="#555" stroke-width="1.4"/></svg><div style="position:absolute;left:1px;top:165.5px;width:1006.5px;height:22px;background:#e6e6e6"></div><div style="position:absolute;left:31.5px;top:187.5px;width:976.0px;height:896.5px;background:#fff"></div><div style="position:absolute;left:1px;top:187.5px;width:30.5px;height:896.5px;background:#e6e6e6"></div><svg style="position:absolute;left:12px;top:168px;overflow:visible" width="19" height="18" viewBox="0 0 19 18"><path d="M18 0 V18 H0 Z" fill="#bdbdbd"/></svg><div style="position:absolute;left:105px;top:187.5px;width:1px;height:896.5px;background:#e6e6e6"></div><div style="position:absolute;left:105px;top:167px;width:1px;height:20.5px;background:#cdcdcd"></div><div style="position:absolute;left:239px;top:187.5px;width:1px;height:896.5px;background:#e6e6e6"></div><div style="position:absolute;left:239px;top:167px;width:1px;height:20.5px;background:#cdcdcd"></div><div style="position:absolute;left:416px;top:187.5px;width:1px;height:896.5px;background:#e6e6e6"></div><div style="position:absolute;left:416px;top:167px;width:1px;height:20.5px;background:#cdcdcd"></div><div style="position:absolute;left:600px;top:187.5px;width:1px;height:896.5px;background:#e6e6e6"></div><div style="position:absolute;left:600px;top:167px;width:1px;height:20.5px;background:#cdcdcd"></div><div style="position:absolute;left:675px;top:187.5px;width:1px;height:896.5px;background:#e6e6e6"></div><div style="position:absolute;left:675px;top:167px;width:1px;height:20.5px;background:#cdcdcd"></div><div style="position:absolute;left:749px;top:187.5px;width:1px;height:896.5px;background:#e6e6e6"></div><div style="position:absolute;left:749px;top:167px;width:1px;height:20.5px;background:#cdcdcd"></div><div style="position:absolute;left:823px;top:187.5px;width:1px;height:896.5px;background:#e6e6e6"></div><div style="position:absolute;left:823px;top:167px;width:1px;height:20.5px;background:#cdcdcd"></div><div style="position:absolute;left:897px;top:187.5px;width:1px;height:896.5px;background:#e6e6e6"></div><div style="position:absolute;left:897px;top:167px;width:1px;height:20.5px;background:#cdcdcd"></div><div style="position:absolute;left:971px;top:187.5px;width:1px;height:896.5px;background:#e6e6e6"></div><div style="position:absolute;left:971px;top:167px;width:1px;height:20.5px;background:#cdcdcd"></div><div style="position:absolute;left:31.5px;top:210px;width:976.0px;height:1px;background:#e6e6e6"></div><div style="position:absolute;left:1px;top:210px;width:30.5px;height:1px;background:#c8c8c8"></div><div style="position:absolute;left:31.5px;top:232px;width:976.0px;height:1px;background:#e6e6e6"></div><div style="position:absolute;left:1px;top:232px;width:30.5px;height:1px;background:#c8c8c8"></div><div style="position:absolute;left:31.5px;top:262px;width:976.0px;height:1px;background:#e6e6e6"></div><div style="position:absolute;left:1px;top:262px;width:30.5px;height:1px;background:#c8c8c8"></div><div style="position:absolute;left:31.5px;top:286px;width:976.0px;height:1px;background:#e6e6e6"></div><div style="position:absolute;left:1px;top:286px;width:30.5px;height:1px;background:#c8c8c8"></div><div style="position:absolute;left:31.5px;top:309px;width:976.0px;height:1px;background:#e6e6e6"></div><div style="position:absolute;left:1px;top:309px;width:30.5px;height:1px;background:#c8c8c8"></div><div style="position:absolute;left:31.5px;top:331px;width:976.0px;height:1px;background:#e6e6e6"></div><div style="position:absolute;left:1px;top:331px;width:30.5px;height:1px;background:#c8c8c8"></div><div style="position:absolute;left:31.5px;top:354px;width:976.0px;height:1px;background:#e6e6e6"></div><div style="position:absolute;left:1px;top:354px;width:30.5px;height:1px;background:#c8c8c8"></div><div style="position:absolute;left:31.5px;top:376px;width:976.0px;height:1px;background:#e6e6e6"></div><div style="position:absolute;left:1px;top:376px;width:30.5px;height:1px;background:#c8c8c8"></div><div style="position:absolute;left:31.5px;top:398px;width:976.0px;height:1px;background:#e6e6e6"></div><div style="position:absolute;left:1px;top:398px;width:30.5px;height:1px;background:#c8c8c8"></div><div style="position:absolute;left:31.5px;top:421px;width:976.0px;height:1px;background:#e6e6e6"></div><div style="position:absolute;left:1px;top:421px;width:30.5px;height:1px;background:#c8c8c8"></div><div style="position:absolute;left:31.5px;top:443px;width:976.0px;height:1px;background:#e6e6e6"></div><div style="position:absolute;left:1px;top:443px;width:30.5px;height:1px;background:#c8c8c8"></div><div style="position:absolute;left:31.5px;top:466px;width:976.0px;height:1px;background:#e6e6e6"></div><div style="position:absolute;left:1px;top:466px;width:30.5px;height:1px;background:#c8c8c8"></div><div style="position:absolute;left:31.5px;top:488px;width:976.0px;height:1px;background:#e6e6e6"></div><div style="position:absolute;left:1px;top:488px;width:30.5px;height:1px;background:#c8c8c8"></div><div style="position:absolute;left:31.5px;top:510px;width:976.0px;height:1px;background:#e6e6e6"></div><div style="position:absolute;left:1px;top:510px;width:30.5px;height:1px;background:#c8c8c8"></div><div style="position:absolute;left:31.5px;top:533px;width:976.0px;height:1px;background:#e6e6e6"></div><div style="position:absolute;left:1px;top:533px;width:30.5px;height:1px;background:#c8c8c8"></div><div style="position:absolute;left:31.5px;top:555px;width:976.0px;height:1px;background:#e6e6e6"></div><div style="position:absolute;left:1px;top:555px;width:30.5px;height:1px;background:#c8c8c8"></div><div style="position:absolute;left:31.5px;top:578px;width:976.0px;height:1px;background:#e6e6e6"></div><div style="position:absolute;left:1px;top:578px;width:30.5px;height:1px;background:#c8c8c8"></div><div style="position:absolute;left:31.5px;top:600px;width:976.0px;height:1px;background:#e6e6e6"></div><div style="position:absolute;left:1px;top:600px;width:30.5px;height:1px;background:#c8c8c8"></div><div style="position:absolute;left:31.5px;top:622px;width:976.0px;height:1px;background:#e6e6e6"></div><div style="position:absolute;left:1px;top:622px;width:30.5px;height:1px;background:#c8c8c8"></div><div style="position:absolute;left:31.5px;top:645px;width:976.0px;height:1px;background:#e6e6e6"></div><div style="position:absolute;left:1px;top:645px;width:30.5px;height:1px;background:#c8c8c8"></div><div style="position:absolute;left:31.5px;top:667px;width:976.0px;height:1px;background:#e6e6e6"></div><div style="position:absolute;left:1px;top:667px;width:30.5px;height:1px;background:#c8c8c8"></div><div style="position:absolute;left:31.5px;top:690px;width:976.0px;height:1px;background:#e6e6e6"></div><div style="position:absolute;left:1px;top:690px;width:30.5px;height:1px;background:#c8c8c8"></div><div style="position:absolute;left:31.5px;top:712px;width:976.0px;height:1px;background:#e6e6e6"></div><div style="position:absolute;left:1px;top:712px;width:30.5px;height:1px;background:#c8c8c8"></div><div style="position:absolute;left:31.5px;top:734px;width:976.0px;height:1px;background:#e6e6e6"></div><div style="position:absolute;left:1px;top:734px;width:30.5px;height:1px;background:#c8c8c8"></div><div style="position:absolute;left:31.5px;top:757px;width:976.0px;height:1px;background:#e6e6e6"></div><div style="position:absolute;left:1px;top:757px;width:30.5px;height:1px;background:#c8c8c8"></div><div style="position:absolute;left:31.5px;top:779px;width:976.0px;height:1px;background:#e6e6e6"></div><div style="position:absolute;left:1px;top:779px;width:30.5px;height:1px;background:#c8c8c8"></div><div style="position:absolute;left:31.5px;top:802px;width:976.0px;height:1px;background:#e6e6e6"></div><div style="position:absolute;left:1px;top:802px;width:30.5px;height:1px;background:#c8c8c8"></div><div style="position:absolute;left:31.5px;top:824px;width:976.0px;height:1px;background:#e6e6e6"></div><div style="position:absolute;left:1px;top:824px;width:30.5px;height:1px;background:#c8c8c8"></div><div style="position:absolute;left:31.5px;top:846px;width:976.0px;height:1px;background:#e6e6e6"></div><div style="position:absolute;left:1px;top:846px;width:30.5px;height:1px;background:#c8c8c8"></div><div style="position:absolute;left:31.5px;top:869px;width:976.0px;height:1px;background:#e6e6e6"></div><div style="position:absolute;left:1px;top:869px;width:30.5px;height:1px;background:#c8c8c8"></div><div style="position:absolute;left:31.5px;top:891px;width:976.0px;height:1px;background:#e6e6e6"></div><div style="position:absolute;left:1px;top:891px;width:30.5px;height:1px;background:#c8c8c8"></div><div style="position:absolute;left:31.5px;top:914px;width:976.0px;height:1px;background:#e6e6e6"></div><div style="position:absolute;left:1px;top:914px;width:30.5px;height:1px;background:#c8c8c8"></div><div style="position:absolute;left:31.5px;top:936px;width:976.0px;height:1px;background:#e6e6e6"></div><div style="position:absolute;left:1px;top:936px;width:30.5px;height:1px;background:#c8c8c8"></div><div style="position:absolute;left:31.5px;top:958px;width:976.0px;height:1px;background:#e6e6e6"></div><div style="position:absolute;left:1px;top:958px;width:30.5px;height:1px;background:#c8c8c8"></div><div style="position:absolute;left:31.5px;top:981px;width:976.0px;height:1px;background:#e6e6e6"></div><div style="position:absolute;left:1px;top:981px;width:30.5px;height:1px;background:#c8c8c8"></div><div style="position:absolute;left:31.5px;top:1003px;width:976.0px;height:1px;background:#e6e6e6"></div><div style="position:absolute;left:1px;top:1003px;width:30.5px;height:1px;background:#c8c8c8"></div><div style="position:absolute;left:31.5px;top:1026px;width:976.0px;height:1px;background:#e6e6e6"></div><div style="position:absolute;left:1px;top:1026px;width:30.5px;height:1px;background:#c8c8c8"></div><div style="position:absolute;left:31.5px;top:1048px;width:976.0px;height:1px;background:#e6e6e6"></div><div style="position:absolute;left:1px;top:1048px;width:30.5px;height:1px;background:#c8c8c8"></div><div style="position:absolute;left:31.5px;top:1070px;width:976.0px;height:1px;background:#e6e6e6"></div><div style="position:absolute;left:1px;top:1070px;width:30.5px;height:1px;background:#c8c8c8"></div><div style="position:absolute;left:1px;top:187px;width:1006.5px;height:1px;background:#bdbdbd"></div><div style="position:absolute;left:31px;top:165.5px;width:1px;height:918.5px;background:#d0d0d0"></div><div style="position:absolute;left:32px;top:165.5px;width:73px;height:21.5px;background:#d2d2d2"></div><div style="position:absolute;left:1px;top:188px;width:30px;height:22px;background:#d2d2d2"></div><div style="position:absolute;left:62.88px;top:169.53px;font-size:16.5px;line-height:16.5px;color:#217346;white-space:nowrap;transform:scaleX(0.9300);transform-origin:0 0;">A</div><div style="position:absolute;left:166.88px;top:169.53px;font-size:16.5px;line-height:16.5px;color:#222;white-space:nowrap;transform:scaleX(0.9300);transform-origin:0 0;">B</div><div style="position:absolute;left:321.96px;top:169.53px;font-size:16.5px;line-height:16.5px;color:#222;white-space:nowrap;transform:scaleX(0.9300);transform-origin:0 0;">C</div><div style="position:absolute;left:502.46px;top:169.53px;font-size:16.5px;line-height:16.5px;color:#222;white-space:nowrap;transform:scaleX(0.9300);transform-origin:0 0;">D</div><div style="position:absolute;left:632.38px;top:169.53px;font-size:16.5px;line-height:16.5px;color:#222;white-space:nowrap;transform:scaleX(0.9300);transform-origin:0 0;">E</div><div style="position:absolute;left:707.31px;top:169.53px;font-size:16.5px;line-height:16.5px;color:#222;white-space:nowrap;transform:scaleX(0.9300);transform-origin:0 0;">F</div><div style="position:absolute;left:780.03px;top:169.53px;font-size:16.5px;line-height:16.5px;color:#222;white-space:nowrap;transform:scaleX(0.9300);transform-origin:0 0;">G</div><div style="position:absolute;left:854.46px;top:169.53px;font-size:16.5px;line-height:16.5px;color:#222;white-space:nowrap;transform:scaleX(0.9300);transform-origin:0 0;">H</div><div style="position:absolute;left:931.87px;top:169.53px;font-size:16.5px;line-height:16.5px;color:#222;white-space:nowrap;transform:scaleX(0.9300);transform-origin:0 0;">I</div><div style="position:absolute;left:12.51px;top:191.13px;font-size:16.5px;line-height:16.5px;color:#217346;white-space:nowrap;transform:scaleX(0.8700);transform-origin:0 0;">1</div><div style="position:absolute;left:12.51px;top:213.63px;font-size:16.5px;line-height:16.5px;color:#222;white-space:nowrap;transform:scaleX(0.8700);transform-origin:0 0;">2</div><div style="position:absolute;left:12.51px;top:243.53px;font-size:16.5px;line-height:16.5px;color:#222;white-space:nowrap;transform:scaleX(0.8700);transform-origin:0 0;">3</div><div style="position:absolute;left:12.51px;top:267.73px;font-size:16.5px;line-height:16.5px;color:#222;white-space:nowrap;transform:scaleX(0.8700);transform-origin:0 0;">4</div><div style="position:absolute;left:12.51px;top:290.13px;font-size:16.5px;line-height:16.5px;color:#222;white-space:nowrap;transform:scaleX(0.8700);transform-origin:0 0;">5</div><div style="position:absolute;left:12.51px;top:312.53px;font-size:16.5px;line-height:16.5px;color:#222;white-space:nowrap;transform:scaleX(0.8700);transform-origin:0 0;">6</div><div style="position:absolute;left:12.51px;top:334.93px;font-size:16.5px;line-height:16.5px;color:#222;white-space:nowrap;transform:scaleX(0.8700);transform-origin:0 0;">7</div><div style="position:absolute;left:12.51px;top:357.33px;font-size:16.5px;line-height:16.5px;color:#222;white-space:nowrap;transform:scaleX(0.8700);transform-origin:0 0;">8</div><div style="position:absolute;left:12.51px;top:379.73px;font-size:16.5px;line-height:16.5px;color:#222;white-space:nowrap;transform:scaleX(0.8700);transform-origin:0 0;">9</div><div style="position:absolute;left:8.52px;top:402.13px;font-size:16.5px;line-height:16.5px;color:#222;white-space:nowrap;transform:scaleX(0.8700);transform-origin:0 0;">10</div><div style="position:absolute;left:9.05px;top:424.53px;font-size:16.5px;line-height:16.5px;color:#222;white-space:nowrap;transform:scaleX(0.8700);transform-origin:0 0;">11</div><div style="position:absolute;left:8.52px;top:446.93px;font-size:16.5px;line-height:16.5px;color:#222;white-space:nowrap;transform:scaleX(0.8700);transform-origin:0 0;">12</div><div style="position:absolute;left:8.52px;top:469.33px;font-size:16.5px;line-height:16.5px;color:#222;white-space:nowrap;transform:scaleX(0.8700);transform-origin:0 0;">13</div><div style="position:absolute;left:8.52px;top:491.73px;font-size:16.5px;line-height:16.5px;color:#222;white-space:nowrap;transform:scaleX(0.8700);transform-origin:0 0;">14</div><div style="position:absolute;left:8.52px;top:514.13px;font-size:16.5px;line-height:16.5px;color:#222;white-space:nowrap;transform:scaleX(0.8700);transform-origin:0 0;">15</div><div style="position:absolute;left:8.52px;top:536.53px;font-size:16.5px;line-height:16.5px;color:#222;white-space:nowrap;transform:scaleX(0.8700);transform-origin:0 0;">16</div><div style="position:absolute;left:8.52px;top:558.93px;font-size:16.5px;line-height:16.5px;color:#222;white-space:nowrap;transform:scaleX(0.8700);transform-origin:0 0;">17</div><div style="position:absolute;left:8.52px;top:581.33px;font-size:16.5px;line-height:16.5px;color:#222;white-space:nowrap;transform:scaleX(0.8700);transform-origin:0 0;">18</div><div style="position:absolute;left:8.52px;top:603.73px;font-size:16.5px;line-height:16.5px;color:#222;white-space:nowrap;transform:scaleX(0.8700);transform-origin:0 0;">19</div><div style="position:absolute;left:8.52px;top:626.13px;font-size:16.5px;line-height:16.5px;color:#222;white-space:nowrap;transform:scaleX(0.8700);transform-origin:0 0;">20</div><div style="position:absolute;left:8.52px;top:648.53px;font-size:16.5px;line-height:16.5px;color:#222;white-space:nowrap;transform:scaleX(0.8700);transform-origin:0 0;">21</div><div style="position:absolute;left:8.52px;top:670.93px;font-size:16.5px;line-height:16.5px;color:#222;white-space:nowrap;transform:scaleX(0.8700);transform-origin:0 0;">22</div><div style="position:absolute;left:8.52px;top:693.33px;font-size:16.5px;line-height:16.5px;color:#222;white-space:nowrap;transform:scaleX(0.8700);transform-origin:0 0;">23</div><div style="position:absolute;left:8.52px;top:715.73px;font-size:16.5px;line-height:16.5px;color:#222;white-space:nowrap;transform:scaleX(0.8700);transform-origin:0 0;">24</div><div style="position:absolute;left:8.52px;top:738.13px;font-size:16.5px;line-height:16.5px;color:#222;white-space:nowrap;transform:scaleX(0.8700);transform-origin:0 0;">25</div><div style="position:absolute;left:8.52px;top:760.53px;font-size:16.5px;line-height:16.5px;color:#222;white-space:nowrap;transform:scaleX(0.8700);transform-origin:0 0;">26</div><div style="position:absolute;left:8.52px;top:782.93px;font-size:16.5px;line-height:16.5px;color:#222;white-space:nowrap;transform:scaleX(0.8700);transform-origin:0 0;">27</div><div style="position:absolute;left:8.52px;top:805.33px;font-size:16.5px;line-height:16.5px;color:#222;white-space:nowrap;transform:scaleX(0.8700);transform-origin:0 0;">28</div><div style="position:absolute;left:8.52px;top:827.73px;font-size:16.5px;line-height:16.5px;color:#222;white-space:nowrap;transform:scaleX(0.8700);transform-origin:0 0;">29</div><div style="position:absolute;left:8.52px;top:850.13px;font-size:16.5px;line-height:16.5px;color:#222;white-space:nowrap;transform:scaleX(0.8700);transform-origin:0 0;">30</div><div style="position:absolute;left:8.52px;top:872.53px;font-size:16.5px;line-height:16.5px;color:#222;white-space:nowrap;transform:scaleX(0.8700);transform-origin:0 0;">31</div><div style="position:absolute;left:8.52px;top:894.93px;font-size:16.5px;line-height:16.5px;color:#222;white-space:nowrap;transform:scaleX(0.8700);transform-origin:0 0;">32</div><div style="position:absolute;left:8.52px;top:917.33px;font-size:16.5px;line-height:16.5px;color:#222;white-space:nowrap;transform:scaleX(0.8700);transform-origin:0 0;">33</div><div style="position:absolute;left:8.52px;top:939.73px;font-size:16.5px;line-height:16.5px;color:#222;white-space:nowrap;transform:scaleX(0.8700);transform-origin:0 0;">34</div><div style="position:absolute;left:8.52px;top:962.13px;font-size:16.5px;line-height:16.5px;color:#222;white-space:nowrap;transform:scaleX(0.8700);transform-origin:0 0;">35</div><div style="position:absolute;left:8.52px;top:984.53px;font-size:16.5px;line-height:16.5px;color:#222;white-space:nowrap;transform:scaleX(0.8700);transform-origin:0 0;">36</div><div style="position:absolute;left:8.52px;top:1006.93px;font-size:16.5px;line-height:16.5px;color:#222;white-space:nowrap;transform:scaleX(0.8700);transform-origin:0 0;">37</div><div style="position:absolute;left:8.52px;top:1029.33px;font-size:16.5px;line-height:16.5px;color:#222;white-space:nowrap;transform:scaleX(0.8700);transform-origin:0 0;">38</div><div style="position:absolute;left:8.52px;top:1051.73px;font-size:16.5px;line-height:16.5px;color:#222;white-space:nowrap;transform:scaleX(0.8700);transform-origin:0 0;">39</div><div style="position:absolute;left:8.52px;top:1074.13px;font-size:16.5px;line-height:16.5px;color:#222;white-space:nowrap;transform:scaleX(0.8700);transform-origin:0 0;">40</div><div style="position:absolute;left:30.5px;top:187px;width:75.5px;height:24px;border:2px solid #2f7f52"></div><div style="position:absolute;left:103px;top:208px;width:5px;height:5px;background:#217346;border:1px solid #fff"></div><div style="position:absolute;left:1007.5px;top:165.5px;width:16.5px;height:918.5px;background:#e6e6e6"></div><div style="position:absolute;left:1007.5px;top:187.5px;width:1px;height:896.5px;background:#c6c6c6"></div><div style="position:absolute;left:1009.5px;top:166.5px;width:12.5px;height:13.5px;background:#fff"></div><svg style="position:absolute;left:1012.5px;top:171px;overflow:visible" width="7" height="4" viewBox="0 0 7 4"><path d="M0 4 L3.5 0 L7 4 Z" fill="#777"/></svg><div style="position:absolute;left:1009.5px;top:181px;width:12.5px;height:867px;background:#fff"></div><div style="position:absolute;left:1009.5px;top:1071px;width:12.5px;height:13px;background:#fff"></div><svg style="position:absolute;left:1012.5px;top:1076px;overflow:visible" width="7" height="4" viewBox="0 0 7 4"><path d="M0 0 L3.5 4 L7 0 Z" fill="#777"/></svg><div style="position:absolute;top:237.10725px;font-size:23.5px;line-height:23.5px;color:#217346;white-space:nowrap;font-weight:bold;left:110px;">Top Artists</div><div style="position:absolute;left:105.5px;top:261.6px;width:495px;height:2px;background:#2f7d4a"></div><div style="position:absolute;top:290.57925px;font-size:15.5px;line-height:15.5px;color:#111;white-space:nowrap;font-style:italic;left:113px;">Source: kaggle.com/omarhanyy/500-greatest-songs-of-all-time</div><div style="position:absolute;left:105px;top:354px;width:496px;height:1px;background:#fff"></div><div style="position:absolute;left:105px;top:331px;width:496px;height:22px;background:#2b7d3f"></div><div style="position:absolute;left:105px;top:353px;width:496px;height:1px;background:#3f6f4d"></div><div style="position:absolute;left:239.5px;top:331.3px;width:1px;height:22px;background:rgba(255,255,255,0.18)"></div><div style="position:absolute;left:415.5px;top:331.3px;width:1px;height:22px;background:rgba(255,255,255,0.18)"></div><div style="position:absolute;top:335.07925px;font-size:15.5px;line-height:15.5px;color:#fff;white-space:nowrap;font-weight:bold;left:172.8px;width:0;display:flex;justify-content:center;">Artist</div><div style="position:absolute;top:335.07925px;font-size:15.5px;line-height:15.5px;color:#fff;white-space:nowrap;font-weight:bold;left:328px;width:0;display:flex;justify-content:center;">Number of Weeks</div><div style="position:absolute;top:335.07925px;font-size:15.5px;line-height:15.5px;color:#fff;white-space:nowrap;font-weight:bold;left:508.5px;width:0;display:flex;justify-content:center;">Maximum Position</div><div style="position:absolute;left:226.6px;top:339.8px;width:13px;height:12.5px;background:linear-gradient(#fff,#eef0f4);border:1px solid #c9ccd2"></div><svg style="position:absolute;left:230.6px;top:345px;overflow:visible" width="5" height="3" viewBox="0 0 5 3"><path d="M0 0 H5 L2.5 2.6 Z" fill="#666"/></svg><div style="position:absolute;left:402.2px;top:339.8px;width:13px;height:12.5px;background:linear-gradient(#fff,#eef0f4);border:1px solid #c9ccd2"></div><svg style="position:absolute;left:406.2px;top:345px;overflow:visible" width="5" height="3" viewBox="0 0 5 3"><path d="M0 0 H5 L2.5 2.6 Z" fill="#666"/></svg><div style="position:absolute;left:587px;top:339.8px;width:13px;height:12.5px;background:linear-gradient(#fff,#eef0f4);border:1px solid #c9ccd2"></div><svg style="position:absolute;left:591px;top:345px;overflow:visible" width="5" height="3" viewBox="0 0 5 3"><path d="M0 0 H5 L2.5 2.6 Z" fill="#666"/></svg><div style="position:absolute;top:356.27925px;font-size:15.5px;line-height:15.5px;color:#111;white-space:nowrap;;left:108.8px;">The Beatles</div><div style="position:absolute;left:387.64px;top:356.78px;font-size:15.5px;line-height:15.5px;color:#111;white-space:nowrap;transform:scaleX(1.0000);transform-origin:0 0;">227</div><div style="position:absolute;left:588.38px;top:356.78px;font-size:15.5px;line-height:15.5px;color:#111;white-space:nowrap;transform:scaleX(1.0000);transform-origin:0 0;">1</div><div style="position:absolute;left:105px;top:375px;width:495px;height:1px;background:#a9a9a9"></div><div style="position:absolute;top:378.67925px;font-size:15.5px;line-height:15.5px;color:#111;white-space:nowrap;;left:108.8px;">The Rolling Stones</div><div style="position:absolute;left:387.64px;top:379.18px;font-size:15.5px;line-height:15.5px;color:#111;white-space:nowrap;transform:scaleX(1.0000);transform-origin:0 0;">107</div><div style="position:absolute;left:588.38px;top:379.18px;font-size:15.5px;line-height:15.5px;color:#111;white-space:nowrap;transform:scaleX(1.0000);transform-origin:0 0;">1</div><div style="position:absolute;left:105px;top:397px;width:495px;height:1px;background:#a9a9a9"></div><div style="position:absolute;top:401.07925px;font-size:15.5px;line-height:15.5px;color:#111;white-space:nowrap;;left:108.8px;">The Beach Boys</div><div style="position:absolute;left:396.26px;top:401.58px;font-size:15.5px;line-height:15.5px;color:#111;white-space:nowrap;transform:scaleX(1.0000);transform-origin:0 0;">83</div><div style="position:absolute;left:588.38px;top:401.58px;font-size:15.5px;line-height:15.5px;color:#111;white-space:nowrap;transform:scaleX(1.0000);transform-origin:0 0;">1</div><div style="position:absolute;left:105px;top:420px;width:495px;height:1px;background:#a9a9a9"></div><div style="position:absolute;top:423.47925px;font-size:15.5px;line-height:15.5px;color:#111;white-space:nowrap;;left:108.8px;">Marvin Gaye</div><div style="position:absolute;left:396.26px;top:423.98px;font-size:15.5px;line-height:15.5px;color:#111;white-space:nowrap;transform:scaleX(1.0000);transform-origin:0 0;">78</div><div style="position:absolute;left:588.38px;top:423.98px;font-size:15.5px;line-height:15.5px;color:#111;white-space:nowrap;transform:scaleX(1.0000);transform-origin:0 0;">1</div><div style="position:absolute;left:105px;top:442px;width:495px;height:1px;background:#a9a9a9"></div><div style="position:absolute;top:445.87924999999996px;font-size:15.5px;line-height:15.5px;color:#111;white-space:nowrap;;left:108.8px;">Bob Dylan</div><div style="position:absolute;left:396.26px;top:446.38px;font-size:15.5px;line-height:15.5px;color:#111;white-space:nowrap;transform:scaleX(1.0000);transform-origin:0 0;">65</div><div style="position:absolute;left:588.38px;top:446.38px;font-size:15.5px;line-height:15.5px;color:#111;white-space:nowrap;transform:scaleX(1.0000);transform-origin:0 0;">2</div><div style="position:absolute;left:105px;top:465px;width:495px;height:1px;background:#a9a9a9"></div><div style="position:absolute;top:468.27925px;font-size:15.5px;line-height:15.5px;color:#111;white-space:nowrap;;left:108.8px;">Nirvana</div><div style="position:absolute;left:396.26px;top:468.78px;font-size:15.5px;line-height:15.5px;color:#111;white-space:nowrap;transform:scaleX(1.0000);transform-origin:0 0;">60</div><div style="position:absolute;left:588.38px;top:468.78px;font-size:15.5px;line-height:15.5px;color:#111;white-space:nowrap;transform:scaleX(1.0000);transform-origin:0 0;">6</div><div style="position:absolute;left:105px;top:487px;width:495px;height:1px;background:#a9a9a9"></div><div style="position:absolute;top:490.67925px;font-size:15.5px;line-height:15.5px;color:#111;white-space:nowrap;;left:108.8px;">Ray Charles</div><div style="position:absolute;left:396.26px;top:491.18px;font-size:15.5px;line-height:15.5px;color:#111;white-space:nowrap;transform:scaleX(1.0000);transform-origin:0 0;">57</div><div style="position:absolute;left:588.38px;top:491.18px;font-size:15.5px;line-height:15.5px;color:#111;white-space:nowrap;transform:scaleX(1.0000);transform-origin:0 0;">1</div><div style="position:absolute;left:105px;top:509px;width:495px;height:1px;background:#a9a9a9"></div><div style="position:absolute;top:513.07925px;font-size:15.5px;line-height:15.5px;color:#111;white-space:nowrap;;left:108.8px;">Chuck Berry</div><div style="position:absolute;left:396.26px;top:513.58px;font-size:15.5px;line-height:15.5px;color:#111;white-space:nowrap;transform:scaleX(1.0000);transform-origin:0 0;">52</div><div style="position:absolute;left:588.38px;top:513.58px;font-size:15.5px;line-height:15.5px;color:#111;white-space:nowrap;transform:scaleX(1.0000);transform-origin:0 0;">2</div><div style="position:absolute;left:105px;top:532px;width:495px;height:1px;background:#a9a9a9"></div><div style="position:absolute;top:535.47925px;font-size:15.5px;line-height:15.5px;color:#111;white-space:nowrap;;left:108.8px;">Aretha Franklin</div><div style="position:absolute;left:396.26px;top:535.98px;font-size:15.5px;line-height:15.5px;color:#111;white-space:nowrap;transform:scaleX(1.0000);transform-origin:0 0;">46</div><div style="position:absolute;left:588.38px;top:535.98px;font-size:15.5px;line-height:15.5px;color:#111;white-space:nowrap;transform:scaleX(1.0000);transform-origin:0 0;">1</div><div style="position:absolute;left:105px;top:554px;width:495px;height:1px;background:#a9a9a9"></div><div style="position:absolute;top:557.87925px;font-size:15.5px;line-height:15.5px;color:#111;white-space:nowrap;;left:108.8px;">John Lennon</div><div style="position:absolute;left:404.88px;top:558.38px;font-size:15.5px;line-height:15.5px;color:#111;white-space:nowrap;transform:scaleX(1.0000);transform-origin:0 0;">9</div><div style="position:absolute;left:588.38px;top:558.38px;font-size:15.5px;line-height:15.5px;color:#111;white-space:nowrap;transform:scaleX(1.0000);transform-origin:0 0;">3</div><div style="position:absolute;left:105px;top:577px;width:495px;height:1px;background:#a9a9a9"></div><div style="position:absolute;left:105px;top:353px;width:1px;height:225px;background:#a9a9a9"></div><div style="position:absolute;left:239px;top:353px;width:1px;height:225px;background:#a9a9a9"></div><div style="position:absolute;left:415px;top:353px;width:1px;height:225px;background:#a9a9a9"></div><div style="position:absolute;left:599px;top:353px;width:1px;height:225px;background:#a9a9a9"></div><div style="position:absolute;left:109px;top:629px;width:546px;height:334px;background:#fff"></div><div style="position:absolute;top:645.07px;font-size:20px;line-height:20px;color:#595959;white-space:nowrap;;left:381.5px;width:0;display:flex;justify-content:center;transform:scaleX(0.985);transform-origin:50% 0;">Number of Weeks</div><div style="position:absolute;left:235px;top:687px;width:1px;height:258px;background:#d9d9d9"></div><div style="position:absolute;left:235.5px;top:694.0px;width:364.789px;height:12px;background:#217346"></div><div style="position:absolute;left:157.29px;top:693.60px;font-size:13px;line-height:13px;color:#595959;white-space:nowrap;transform:scaleX(0.9400);transform-origin:0 0;">The Beatles</div><div style="position:absolute;left:610.79px;top:694.40px;font-size:13px;line-height:13px;color:#404040;white-space:nowrap;transform:scaleX(0.9500);transform-origin:0 0;font-weight:bold;">227</div><div style="position:absolute;left:235.5px;top:719.92px;width:171.949px;height:12px;background:#217346"></div><div style="position:absolute;left:119.25px;top:719.52px;font-size:13px;line-height:13px;color:#595959;white-space:nowrap;transform:scaleX(0.9400);transform-origin:0 0;">The Rolling Stones</div><div style="position:absolute;left:417.95px;top:720.32px;font-size:13px;line-height:13px;color:#404040;white-space:nowrap;transform:scaleX(0.9500);transform-origin:0 0;font-weight:bold;">107</div><div style="position:absolute;left:235.5px;top:745.84px;width:133.381px;height:12px;background:#217346"></div><div style="position:absolute;left:132.83px;top:745.44px;font-size:13px;line-height:13px;color:#595959;white-space:nowrap;transform:scaleX(0.9400);transform-origin:0 0;">The Beach Boys</div><div style="position:absolute;left:379.38px;top:746.24px;font-size:13px;line-height:13px;color:#404040;white-space:nowrap;transform:scaleX(0.9500);transform-origin:0 0;font-weight:bold;">83</div><div style="position:absolute;left:235.5px;top:771.76px;width:125.346px;height:12px;background:#217346"></div><div style="position:absolute;left:153.23px;top:771.36px;font-size:13px;line-height:13px;color:#595959;white-space:nowrap;transform:scaleX(0.9400);transform-origin:0 0;">Marvin Gaye</div><div style="position:absolute;left:371.35px;top:772.16px;font-size:13px;line-height:13px;color:#404040;white-space:nowrap;transform:scaleX(0.9500);transform-origin:0 0;font-weight:bold;">78</div><div style="position:absolute;left:235.5px;top:797.6800000000001px;width:104.455px;height:12px;background:#217346"></div><div style="position:absolute;left:166.12px;top:797.28px;font-size:13px;line-height:13px;color:#595959;white-space:nowrap;transform:scaleX(0.9400);transform-origin:0 0;">Bob Dylan</div><div style="position:absolute;left:350.45px;top:798.08px;font-size:13px;line-height:13px;color:#404040;white-space:nowrap;transform:scaleX(0.9500);transform-origin:0 0;font-weight:bold;">65</div><div style="position:absolute;left:235.5px;top:823.6px;width:96.42px;height:12px;background:#217346"></div><div style="position:absolute;left:180.39px;top:823.20px;font-size:13px;line-height:13px;color:#595959;white-space:nowrap;transform:scaleX(0.9400);transform-origin:0 0;">Nirvana</div><div style="position:absolute;left:342.42px;top:824.00px;font-size:13px;line-height:13px;color:#404040;white-space:nowrap;transform:scaleX(0.9500);transform-origin:0 0;font-weight:bold;">60</div><div style="position:absolute;left:235.5px;top:849.52px;width:91.599px;height:12px;background:#217346"></div><div style="position:absolute;left:155.26px;top:849.12px;font-size:13px;line-height:13px;color:#595959;white-space:nowrap;transform:scaleX(0.9400);transform-origin:0 0;">Ray Charles</div><div style="position:absolute;left:337.60px;top:849.92px;font-size:13px;line-height:13px;color:#404040;white-space:nowrap;transform:scaleX(0.9500);transform-origin:0 0;font-weight:bold;">57</div><div style="position:absolute;left:235.5px;top:875.44px;width:83.564px;height:12px;background:#217346"></div><div style="position:absolute;left:155.27px;top:875.04px;font-size:13px;line-height:13px;color:#595959;white-space:nowrap;transform:scaleX(0.9400);transform-origin:0 0;">Chuck Berry</div><div style="position:absolute;left:329.56px;top:875.84px;font-size:13px;line-height:13px;color:#404040;white-space:nowrap;transform:scaleX(0.9500);transform-origin:0 0;font-weight:bold;">52</div><div style="position:absolute;left:235.5px;top:901.36px;width:73.922px;height:12px;background:#217346"></div><div style="position:absolute;left:139.64px;top:900.96px;font-size:13px;line-height:13px;color:#595959;white-space:nowrap;transform:scaleX(0.9400);transform-origin:0 0;">Aretha Franklin</div><div style="position:absolute;left:319.92px;top:901.76px;font-size:13px;line-height:13px;color:#404040;white-space:nowrap;transform:scaleX(0.9500);transform-origin:0 0;font-weight:bold;">46</div><div style="position:absolute;left:235.5px;top:927.28px;width:14.463px;height:12px;background:#217346"></div><div style="position:absolute;left:151.83px;top:926.88px;font-size:13px;line-height:13px;color:#595959;white-space:nowrap;transform:scaleX(0.9400);transform-origin:0 0;">John Lennon</div><div style="position:absolute;left:260.46px;top:927.68px;font-size:13px;line-height:13px;color:#404040;white-space:nowrap;transform:scaleX(0.9500);transform-origin:0 0;font-weight:bold;">9</div><div style="position:absolute;left:1px;top:1084px;width:1007px;height:17px;background:#e6e6e6"></div><div style="position:absolute;left:1px;top:1083.5px;width:1007px;height:1px;background:#c8c8c8"></div><svg style="position:absolute;left:16px;top:1088px;overflow:visible" width="6" height="9" viewBox="0 0 6 9"><path d="M5 0 V9 L0 4.5 Z" fill="#c4c4c4"/></svg><svg style="position:absolute;left:35px;top:1088px;overflow:visible" width="6" height="9" viewBox="0 0 6 9"><path d="M0 0 V9 L5 4.5 Z" fill="#c4c4c4"/></svg><div style="position:absolute;left:66px;top:1085px;width:66px;height:15px;background:#217346"></div><div style="position:absolute;left:71.60px;top:1086.21px;font-size:10.5px;line-height:10.5px;color:#fff;white-space:nowrap;transform:scaleX(1.0582);transform-origin:0 0;">Outputs--&gt;</div><div style="position:absolute;left:133px;top:1084px;width:61.5px;height:17px;background:linear-gradient(#fff 0%,#fff 55%,#d9eadf 100%)"></div><div style="position:absolute;left:133px;top:1099.5px;width:61.5px;height:1.5px;background:#3f8c5a"></div><div style="position:absolute;left:140.00px;top:1086.21px;font-size:10.5px;line-height:10.5px;color:#217346;white-space:nowrap;transform:scaleX(1.0065);transform-origin:0 0;font-weight:bold;">Overview</div><div style="position:absolute;left:195.5px;top:1085px;width:57.5px;height:15px;background:#7f7f7f"></div><div style="position:absolute;left:201.00px;top:1086.21px;font-size:10.5px;line-height:10.5px;color:#fff;white-space:nowrap;transform:scaleX(1.0544);transform-origin:0 0;">Inputs--&gt;</div><div style="position:absolute;left:256px;top:1085px;width:32px;height:15px;background:#7f7f7f"></div><div style="position:absolute;left:261.40px;top:1086.21px;font-size:10.5px;line-height:10.5px;color:#fff;white-space:nowrap;transform:scaleX(0.9171);transform-origin:0 0;">Lists</div><div style="position:absolute;left:291px;top:1085px;width:33px;height:15px;background:#7f7f7f"></div><div style="position:absolute;left:297.00px;top:1086.21px;font-size:10.5px;line-height:10.5px;color:#fff;white-space:nowrap;transform:scaleX(0.9468);transform-origin:0 0;">Data</div><svg style="position:absolute;left:346px;top:1086px;overflow:visible" width="13" height="13" viewBox="0 0 13 13"><circle cx="6.5" cy="6.5" r="5.8" fill="none" stroke="#666" stroke-width="1"/><path d="M6.5 3.5 V9.5 M3.5 6.5 H9.5" stroke="#666" stroke-width="1"/></svg><div style="position:absolute;left:613px;top:1088px;width:1.2px;height:1.2px;background:#999"></div><div style="position:absolute;left:613px;top:1092px;width:1.2px;height:1.2px;background:#999"></div><div style="position:absolute;left:613px;top:1096px;width:1.2px;height:1.2px;background:#999"></div><div style="position:absolute;left:624px;top:1086.5px;width:383.5px;height:12.5px;background:#d6d6d6"></div><div style="position:absolute;left:624px;top:1086.5px;width:12px;height:12.5px;background:#fff"></div><svg style="position:absolute;left:627.5px;top:1089px;overflow:visible" width="5" height="7" viewBox="0 0 5 7"><path d="M4 0 V7 L0 3.5 Z" fill="#555"/></svg><div style="position:absolute;left:637px;top:1086.5px;width:317px;height:12.5px;background:#fff"></div><div style="position:absolute;left:995px;top:1086.5px;width:12.5px;height:12.5px;background:#fff"></div><svg style="position:absolute;left:999px;top:1089px;overflow:visible" width="5" height="7" viewBox="0 0 5 7"><path d="M0 0 V7 L4 3.5 Z" fill="#555"/></svg><div style="position:absolute;left:1px;top:1101px;width:1024px;height:18px;background:#f3f2f1"></div><div style="position:absolute;left:7.00px;top:1106.83px;font-size:9.3px;line-height:9.3px;color:#555;white-space:nowrap;transform:scaleX(0.8444);transform-origin:0 0;">Ready</div><svg style="position:absolute;left:44px;top:1105px;overflow:visible" width="12" height="11" viewBox="0 0 12 11"><path d="M0.5 0.5 H11.5 V10.5 H0.5 Z M0.5 2.5 H11.5" fill="none" stroke="#666" stroke-width="1"/><circle cx="8" cy="7" r="2.2" fill="none" stroke="#666"/><circle cx="8" cy="7" r="0.8" fill="#666"/></svg><svg style="position:absolute;left:69px;top:1104px;overflow:visible" width="13" height="13" viewBox="0 0 13 13"><path d="M4 2 A5 5 0 1 0 6 11.5" fill="none" stroke="#666" stroke-width="1"/><circle cx="8.5" cy="4" r="1" fill="#666"/><path d="M6 6 H11 M8.5 5 V8 L6 12 M8.5 8 L11 12" fill="none" stroke="#666" stroke-width="1"/></svg><div style="position:absolute;left:84.00px;top:1106.83px;font-size:9.3px;line-height:9.3px;color:#555;white-space:nowrap;transform:scaleX(0.8731);transform-origin:0 0;">Accessibility: Investigate</div><svg style="position:absolute;left:689px;top:1105px;overflow:visible" width="12" height="11" viewBox="0 0 12 11"><path d="M0.5 0.5 H11.5 V7.5 H0.5 Z M4 10.5 H6" fill="none" stroke="#666" stroke-width="1"/><circle cx="8.5" cy="8" r="2.5" fill="#f3f2f1" stroke="#666"/></svg><div style="position:absolute;left:703.00px;top:1106.83px;font-size:9.3px;line-height:9.3px;color:#555;white-space:nowrap;transform:scaleX(0.8848);transform-origin:0 0;">Display Settings</div><div style="position:absolute;left:777px;top:1101.7px;width:31.6px;height:17.3px;background:#d2d2d2"></div><svg style="position:absolute;left:787px;top:1105px;overflow:visible" width="11" height="11" viewBox="0 0 11 11"><path d="M0.5 0.5 H10.5 V10.5 H0.5 Z M3.8 0.5 V10.5 M7.2 0.5 V10.5 M0.5 3.8 H10.5 M0.5 7.2 H10.5" fill="none" stroke="#444" stroke-width="1"/></svg><svg style="position:absolute;left:819.5px;top:1105px;overflow:visible" width="11" height="11" viewBox="0 0 11 11"><path d="M0.5 0.5 H10.5 V10.5 H0.5 Z M2.5 2.5 H8.5 V8.5 H2.5 Z M2.5 5.5 H8.5" fill="none" stroke="#555" stroke-width="1"/></svg><svg style="position:absolute;left:851px;top:1105px;overflow:visible" width="12" height="11" viewBox="0 0 12 11"><path d="M0.5 0.5 H11.5 V10.5 H0.5 Z M6 0.5 V6.5 H11.5 M3 0.5 V6.5 M0.5 6.5 H6" fill="none" stroke="#555" stroke-width="1"/></svg><div style="position:absolute;left:877px;top:1110px;width:6.5px;height:1px;background:#666"></div><div style="position:absolute;left:888px;top:1110px;width:79px;height:1px;background:#aaa"></div><div style="position:absolute;left:931px;top:1105.5px;width:4.5px;height:10px;background:#555"></div><div style="position:absolute;left:971px;top:1110px;width:6.5px;height:1px;background:#666"></div><div style="position:absolute;left:974px;top:1107px;width:1px;height:6.5px;background:#666"></div><div style="position:absolute;left:987.50px;top:1106.83px;font-size:9.3px;line-height:9.3px;color:#555;white-space:nowrap;transform:scaleX(0.8871);transform-origin:0 0;">145%</div><div style="position:absolute;left:0px;top:0px;width:1px;height:1119px;background:#217346"></div></div>
</body></html>
